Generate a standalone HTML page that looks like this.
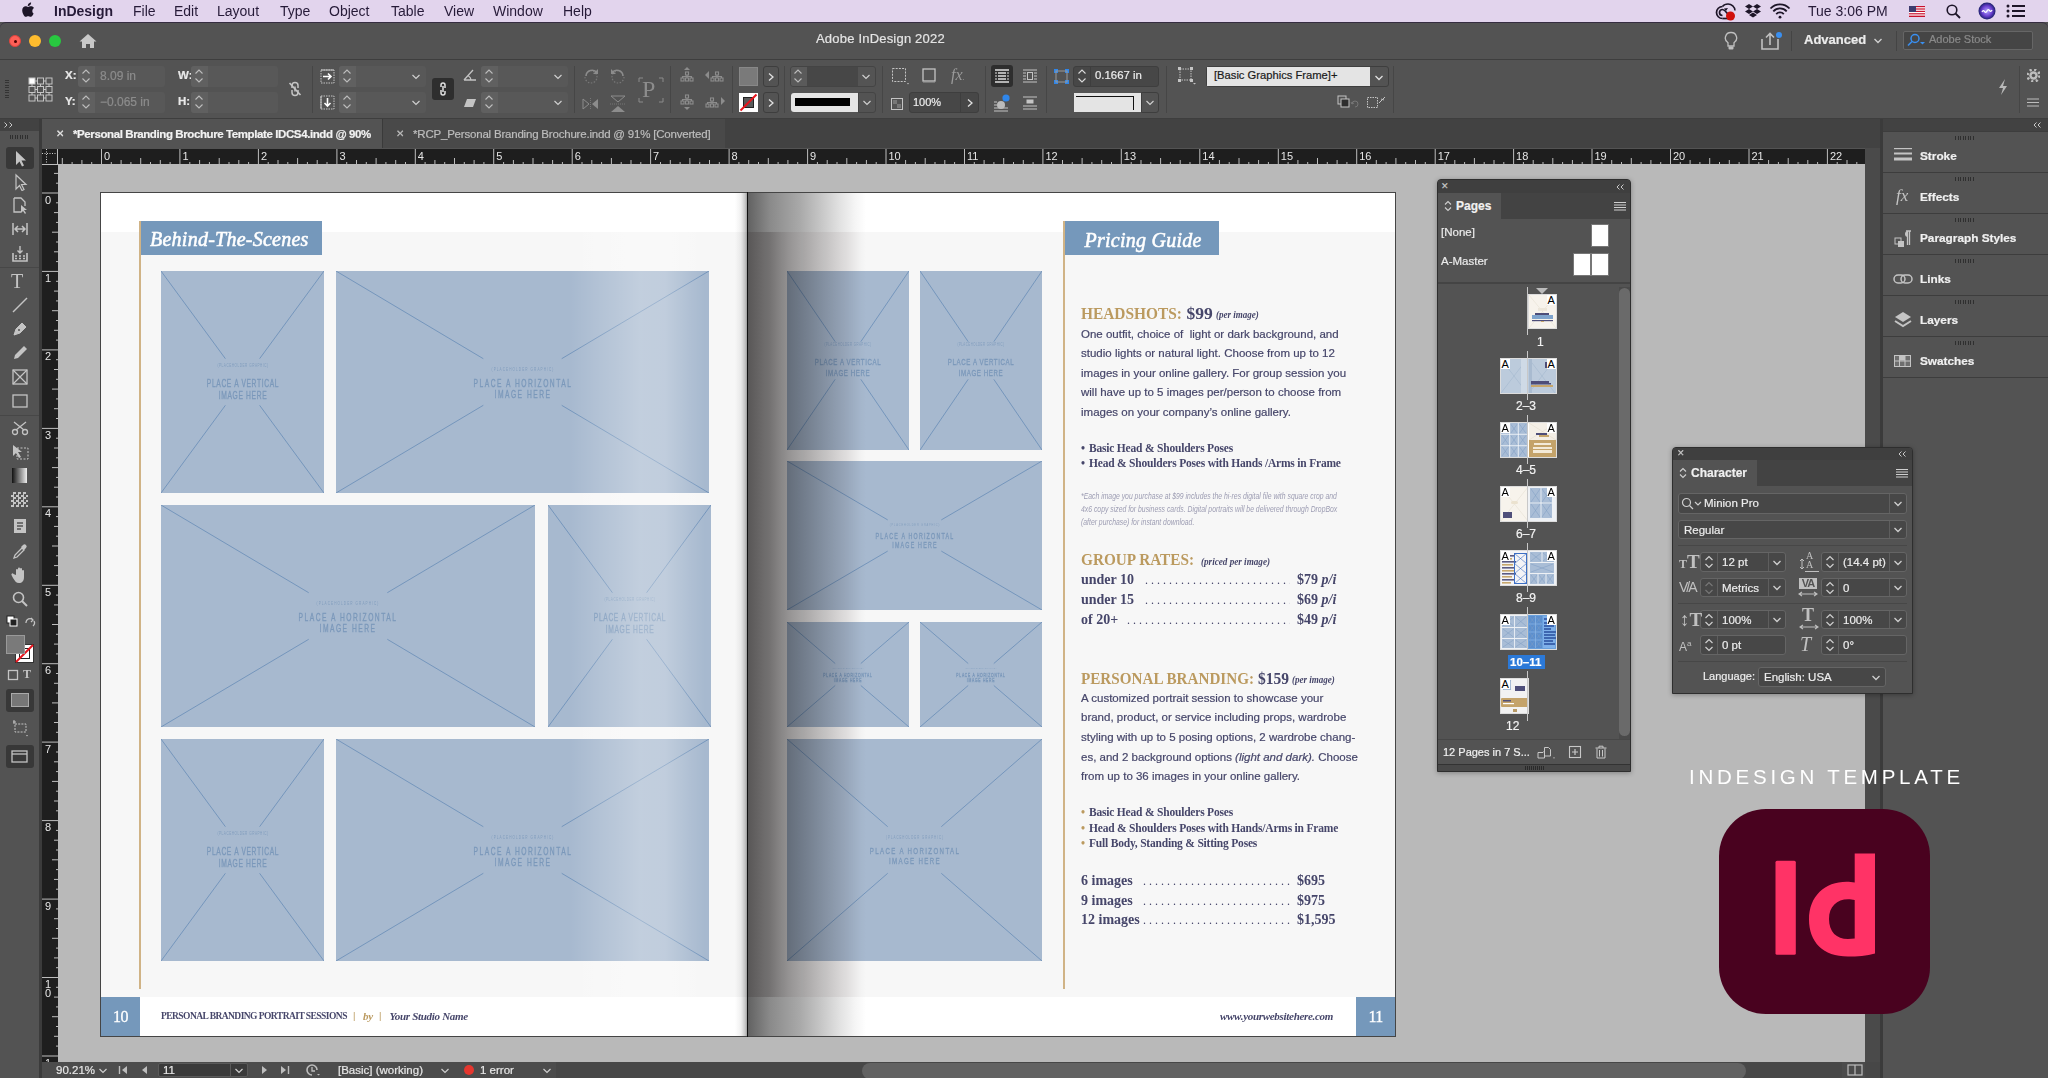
<!DOCTYPE html>
<html><head><meta charset="utf-8">
<style>
*{margin:0;padding:0;box-sizing:border-box}
html,body{width:2048px;height:1078px;overflow:hidden;background:#535353;font-family:"Liberation Sans",sans-serif;position:relative}
.a{position:absolute}

#menubar{left:0;top:0;width:2048px;height:22px;background:#e2d4ed}
.mi{position:absolute;top:3px;font-size:14px;color:#261a38;line-height:16px;white-space:nowrap}
.tb{background:#535353}
.ui{font-size:12px;color:#e8e8e8;white-space:nowrap;position:absolute;-webkit-text-stroke-width:.2px}


.ph{background:#a7b9cf;overflow:hidden}
.pht{position:absolute;left:-50%;width:200%;text-align:center;color:#7b98ba;font-family:"Liberation Sans",sans-serif;font-weight:normal;-webkit-text-stroke:.35px #7b98ba;transform:scaleX(.62);white-space:nowrap}
.hdr span{position:absolute;font-family:"Liberation Serif",serif;font-style:italic;font-weight:normal;-webkit-text-stroke:.55px #fff;color:#fff;font-size:20px;white-space:nowrap;letter-spacing:.25px}
.pn{color:#fff;font-family:"Liberation Serif",serif;font-size:16px;text-align:center;line-height:39px;letter-spacing:-.6px;-webkit-text-stroke:.3px #fff}
.ft{font-family:"Liberation Serif",serif;font-weight:bold;font-size:9.5px;color:#46466a;white-space:nowrap;line-height:14px;letter-spacing:-.3px}
.ft i{font-size:11px}
.g{color:#bb9a5f}
.gh3{font-family:"Liberation Serif",serif;font-weight:bold;font-size:17.5px;line-height:20px;color:#bb9a5f;white-space:nowrap}
.pr3{font-family:"Liberation Serif",serif;font-weight:bold;font-size:17.5px;line-height:20px;color:#46466a;white-space:nowrap}
.pi2{font-family:"Liberation Serif",serif;font-weight:bold;font-style:italic;font-size:10.5px;line-height:12px;color:#46466a;white-space:nowrap}
.hl{font-family:"Liberation Serif",serif;white-space:nowrap;line-height:22px;color:#46466a}
.gh{color:#bb9a5f;font-size:17px;font-weight:bold;letter-spacing:-.6px}
.gh2{color:#bb9a5f;font-size:17px;font-weight:bold;letter-spacing:-.6px}
.pr{font-size:17px;letter-spacing:-.4px}
.pi{font-size:10px;font-weight:bold;letter-spacing:-.5px}
.bd{font-family:"Liberation Sans",sans-serif;font-size:11.5px;color:#46466a;white-space:nowrap;line-height:16px;-webkit-text-stroke:.2px #46466a}
.bl{font-family:"Liberation Serif",serif;font-weight:bold;font-size:11.5px;color:#46466a;white-space:nowrap;line-height:14px;letter-spacing:-.2px}
.bu{display:inline-block;width:8px}
.nt{font-family:"Liberation Sans",sans-serif;font-style:italic;font-size:9.5px;color:#9d9db3;white-space:nowrap;line-height:12px;transform:scaleX(.72);transform-origin:0 0}
.rt{font-family:"Liberation Serif",serif;font-weight:bold;font-size:14px;color:#46466a;white-space:nowrap;line-height:18px}
.dt{font-family:"Liberation Serif",serif;font-size:12px;color:#46466a;white-space:nowrap;line-height:18px}

</style></head><body>
<div id="menubar" class="a">
<span class="mi" style="left:54px;font-weight:bold">InDesign</span>
<span class="mi" style="left:133px;">File</span>
<span class="mi" style="left:174px;">Edit</span>
<span class="mi" style="left:217px;">Layout</span>
<span class="mi" style="left:280px;">Type</span>
<span class="mi" style="left:329px;">Object</span>
<span class="mi" style="left:391px;">Table</span>
<span class="mi" style="left:444px;">View</span>
<span class="mi" style="left:493px;">Window</span>
<span class="mi" style="left:563px;">Help</span>
</div>
<div class="a" style="left:0;top:22px;width:2048px;height:38px;background:#535353;border-top:1px solid #352c40;border-radius:6px 6px 0 0"></div>
<div class="a" style="left:0;top:59px;width:2048px;height:1px;background:#3e3e3e"></div>
<div class="a" style="left:0;top:60px;width:2048px;height:59px;background:#535353"></div>
<div class="a" style="left:0;top:118px;width:2048px;height:1px;background:#3e3e3e"></div>
<div class="a" style="left:0;top:119px;width:39px;height:959px;background:#535353"></div>
<div class="a" style="left:39px;top:119px;width:3px;height:959px;background:#3b3b3b"></div>
<div class="a" style="left:42px;top:119px;width:1838px;height:29px;background:#424242"></div>
<div class="a" style="left:42px;top:119px;width:340px;height:29px;background:#535353"></div>
<div class="a" style="left:382px;top:119px;width:343px;height:29px;background:#494949;border-left:1px solid #3a3a3a"></div>
<div class="a" style="left:42px;top:149px;width:1823px;height:15px;background:#1e1e1e"></div>
<div class="a" style="left:42px;top:164px;width:16px;height:898px;background:#1e1e1e"></div>
<div class="a" style="left:58px;top:164px;width:1807px;height:898px;background:#b9b9b9"></div>
<div class="a" style="left:1865px;top:148px;width:15px;height:914px;background:#4a4a4a"></div>
<div class="a" style="left:42px;top:1062px;width:1838px;height:16px;background:#474747"></div>
<div class="a" style="left:1880px;top:119px;width:3px;height:959px;background:#3b3b3b"></div>
<div class="a" style="left:1883px;top:119px;width:165px;height:959px;background:#535353"></div>
<div class="a" style="left:100px;top:192px;width:1296px;height:845px;background:#454545"></div>
<div class="a" style="left:101px;top:193px;width:1294px;height:843px;background:#fff"></div>
<div class="a" style="left:101px;top:232px;width:1294px;height:765px;background:#f7f7f7"></div>
<div class="a hdr" style="left:139px;top:221px;width:183px;height:34px;background:#7598bb"><span style="left:11px;top:7px">Behind-The-Scenes</span></div>
<div class="a hdr" style="left:1064px;top:221px;width:155px;height:34px;background:#7598bb"><span style="left:20.5px;top:8px">Pricing Guide</span></div>
<div class="a" style="left:139px;top:221px;width:1.5px;height:768px;background:#d0b386"></div>
<div class="a" style="left:1063px;top:221px;width:1.5px;height:768px;background:#d0b386"></div>
<div class="a ph" style="left:161px;top:271px;width:163px;height:222px"><svg class="a" style="left:0;top:0" width="163" height="222"><g stroke="#7294bb" stroke-width="0.95"><line x1="0" y1="0" x2="64.4" y2="87.7"/><line x1="163" y1="0" x2="98.6" y2="87.7"/><line x1="0" y1="222" x2="64.4" y2="134.3"/><line x1="163" y1="222" x2="98.6" y2="134.3"/></g></svg><div class="pht" style="top:91.0px;font-size:5.0px;line-height:6.0px;-webkit-text-stroke-width:0;letter-spacing:0.85px;opacity:.85">(PLACEHOLDER GRAPHIC)</div><div class="pht" style="top:106.2px;font-size:10.8px;line-height:12.0px;letter-spacing:1.05px">PLACE A VERTICAL<br>IMAGE HERE</div></div>
<div class="a ph" style="left:336px;top:271px;width:373px;height:222px"><svg class="a" style="left:0;top:0" width="373" height="222"><g stroke="#7294bb" stroke-width="0.95"><line x1="0" y1="0" x2="147.3" y2="87.7"/><line x1="373" y1="0" x2="225.7" y2="87.7"/><line x1="0" y1="222" x2="147.3" y2="134.3"/><line x1="373" y1="222" x2="225.7" y2="134.3"/></g></svg><div class="pht" style="top:95.0px;font-size:5.0px;line-height:6.0px;-webkit-text-stroke-width:0;letter-spacing:1.75px;opacity:.85">(PLACEHOLDER GRAPHIC)</div><div class="pht" style="top:107.0px;font-size:10.8px;line-height:10.5px;letter-spacing:2.40px">PLACE A HORIZONTAL<br>IMAGE HERE</div></div>
<div class="a ph" style="left:161px;top:505px;width:374px;height:222px"><svg class="a" style="left:0;top:0" width="374" height="222"><g stroke="#7294bb" stroke-width="0.95"><line x1="0" y1="0" x2="147.7" y2="87.7"/><line x1="374" y1="0" x2="226.3" y2="87.7"/><line x1="0" y1="222" x2="147.7" y2="134.3"/><line x1="374" y1="222" x2="226.3" y2="134.3"/></g></svg><div class="pht" style="top:95.0px;font-size:5.0px;line-height:6.0px;-webkit-text-stroke-width:0;letter-spacing:1.75px;opacity:.85">(PLACEHOLDER GRAPHIC)</div><div class="pht" style="top:107.0px;font-size:10.8px;line-height:10.5px;letter-spacing:2.40px">PLACE A HORIZONTAL<br>IMAGE HERE</div></div>
<div class="a ph" style="left:548px;top:505px;width:163px;height:222px"><svg class="a" style="left:0;top:0" width="163" height="222"><g stroke="#7294bb" stroke-width="0.95"><line x1="0" y1="0" x2="64.4" y2="87.7"/><line x1="163" y1="0" x2="98.6" y2="87.7"/><line x1="0" y1="222" x2="64.4" y2="134.3"/><line x1="163" y1="222" x2="98.6" y2="134.3"/></g></svg><div class="pht" style="top:91.0px;font-size:5.0px;line-height:6.0px;-webkit-text-stroke-width:0;letter-spacing:0.85px;opacity:.85">(PLACEHOLDER GRAPHIC)</div><div class="pht" style="top:106.2px;font-size:10.8px;line-height:12.0px;letter-spacing:1.05px">PLACE A VERTICAL<br>IMAGE HERE</div></div>
<div class="a ph" style="left:161px;top:739px;width:163px;height:222px"><svg class="a" style="left:0;top:0" width="163" height="222"><g stroke="#7294bb" stroke-width="0.95"><line x1="0" y1="0" x2="64.4" y2="87.7"/><line x1="163" y1="0" x2="98.6" y2="87.7"/><line x1="0" y1="222" x2="64.4" y2="134.3"/><line x1="163" y1="222" x2="98.6" y2="134.3"/></g></svg><div class="pht" style="top:91.0px;font-size:5.0px;line-height:6.0px;-webkit-text-stroke-width:0;letter-spacing:0.85px;opacity:.85">(PLACEHOLDER GRAPHIC)</div><div class="pht" style="top:106.2px;font-size:10.8px;line-height:12.0px;letter-spacing:1.05px">PLACE A VERTICAL<br>IMAGE HERE</div></div>
<div class="a ph" style="left:336px;top:739px;width:373px;height:222px"><svg class="a" style="left:0;top:0" width="373" height="222"><g stroke="#7294bb" stroke-width="0.95"><line x1="0" y1="0" x2="147.3" y2="87.7"/><line x1="373" y1="0" x2="225.7" y2="87.7"/><line x1="0" y1="222" x2="147.3" y2="134.3"/><line x1="373" y1="222" x2="225.7" y2="134.3"/></g></svg><div class="pht" style="top:95.0px;font-size:5.0px;line-height:6.0px;-webkit-text-stroke-width:0;letter-spacing:1.75px;opacity:.85">(PLACEHOLDER GRAPHIC)</div><div class="pht" style="top:107.0px;font-size:10.8px;line-height:10.5px;letter-spacing:2.40px">PLACE A HORIZONTAL<br>IMAGE HERE</div></div>
<div class="a ph" style="left:787px;top:271px;width:122px;height:179px"><svg class="a" style="left:0;top:0" width="122" height="179"><g stroke="#7294bb" stroke-width="0.95"><line x1="0" y1="0" x2="48.2" y2="70.7"/><line x1="122" y1="0" x2="73.8" y2="70.7"/><line x1="0" y1="179" x2="48.2" y2="108.3"/><line x1="122" y1="179" x2="73.8" y2="108.3"/></g></svg><div class="pht" style="top:71.1px;font-size:4.6px;line-height:5.5px;-webkit-text-stroke-width:0;letter-spacing:0.78px;opacity:.85">(PLACEHOLDER GRAPHIC)</div><div class="pht" style="top:85.1px;font-size:9.9px;line-height:11.0px;letter-spacing:0.97px">PLACE A VERTICAL<br>IMAGE HERE</div></div>
<div class="a ph" style="left:920px;top:271px;width:122px;height:179px"><svg class="a" style="left:0;top:0" width="122" height="179"><g stroke="#7294bb" stroke-width="0.95"><line x1="0" y1="0" x2="48.2" y2="70.7"/><line x1="122" y1="0" x2="73.8" y2="70.7"/><line x1="0" y1="179" x2="48.2" y2="108.3"/><line x1="122" y1="179" x2="73.8" y2="108.3"/></g></svg><div class="pht" style="top:71.1px;font-size:4.6px;line-height:5.5px;-webkit-text-stroke-width:0;letter-spacing:0.78px;opacity:.85">(PLACEHOLDER GRAPHIC)</div><div class="pht" style="top:85.1px;font-size:9.9px;line-height:11.0px;letter-spacing:0.97px">PLACE A VERTICAL<br>IMAGE HERE</div></div>
<div class="a ph" style="left:787px;top:461px;width:255px;height:149px"><svg class="a" style="left:0;top:0" width="255" height="149"><g stroke="#7294bb" stroke-width="0.95"><line x1="0" y1="0" x2="100.7" y2="58.9"/><line x1="255" y1="0" x2="154.3" y2="58.9"/><line x1="0" y1="149" x2="100.7" y2="90.1"/><line x1="255" y1="149" x2="154.3" y2="90.1"/></g></svg><div class="pht" style="top:61.7px;font-size:4.0px;line-height:4.8px;-webkit-text-stroke-width:0;letter-spacing:1.40px;opacity:.85">(PLACEHOLDER GRAPHIC)</div><div class="pht" style="top:71.3px;font-size:8.6px;line-height:8.4px;letter-spacing:1.92px">PLACE A HORIZONTAL<br>IMAGE HERE</div></div>
<div class="a ph" style="left:787px;top:622px;width:122px;height:105px"><svg class="a" style="left:0;top:0" width="122" height="105"><g stroke="#7294bb" stroke-width="0.95"><line x1="0" y1="0" x2="48.2" y2="41.5"/><line x1="122" y1="0" x2="73.8" y2="41.5"/><line x1="0" y1="105" x2="48.2" y2="63.5"/><line x1="122" y1="105" x2="73.8" y2="63.5"/></g></svg><div class="pht" style="top:44.5px;font-size:2.5px;line-height:3.0px;-webkit-text-stroke-width:0;letter-spacing:0.88px;opacity:.85">(PLACEHOLDER GRAPHIC)</div><div class="pht" style="top:50.5px;font-size:5.4px;line-height:5.2px;letter-spacing:1.20px">PLACE A HORIZONTAL<br>IMAGE HERE</div></div>
<div class="a ph" style="left:920px;top:622px;width:122px;height:105px"><svg class="a" style="left:0;top:0" width="122" height="105"><g stroke="#7294bb" stroke-width="0.95"><line x1="0" y1="0" x2="48.2" y2="41.5"/><line x1="122" y1="0" x2="73.8" y2="41.5"/><line x1="0" y1="105" x2="48.2" y2="63.5"/><line x1="122" y1="105" x2="73.8" y2="63.5"/></g></svg><div class="pht" style="top:44.5px;font-size:2.5px;line-height:3.0px;-webkit-text-stroke-width:0;letter-spacing:0.88px;opacity:.85">(PLACEHOLDER GRAPHIC)</div><div class="pht" style="top:50.5px;font-size:5.4px;line-height:5.2px;letter-spacing:1.20px">PLACE A HORIZONTAL<br>IMAGE HERE</div></div>
<div class="a ph" style="left:787px;top:739px;width:255px;height:222px"><svg class="a" style="left:0;top:0" width="255" height="222"><g stroke="#7294bb" stroke-width="0.95"><line x1="0" y1="0" x2="100.7" y2="87.7"/><line x1="255" y1="0" x2="154.3" y2="87.7"/><line x1="0" y1="222" x2="100.7" y2="134.3"/><line x1="255" y1="222" x2="154.3" y2="134.3"/></g></svg><div class="pht" style="top:96.3px;font-size:4.6px;line-height:5.5px;-webkit-text-stroke-width:0;letter-spacing:1.61px;opacity:.85">(PLACEHOLDER GRAPHIC)</div><div class="pht" style="top:107.3px;font-size:9.9px;line-height:9.7px;letter-spacing:2.21px">PLACE A HORIZONTAL<br>IMAGE HERE</div></div>
<div class="a pn" style="left:101px;top:997px;width:39px;height:39px;background:#7598bb">10</div>
<div class="a pn" style="left:1356px;top:997px;width:39px;height:39px;background:#7598bb">11</div>
<div class="a ft" style="left:161px;top:1009px;letter-spacing:-.55px">PERSONAL BRANDING PORTRAIT SESSIONS</div>
<div class="a ft g" style="left:353px;top:1008px;font-size:11px">|</div>
<div class="a ft g" style="left:363px;top:1009px"><i>by</i></div>
<div class="a ft g" style="left:379px;top:1008px;font-size:11px">|</div>
<div class="a ft" style="left:389.5px;top:1009px"><i>Your Studio Name</i></div>
<div class="a ft" style="left:1220px;top:1009px"><i>www.yourwebsitehere.com</i></div>
<div class="a gh3" style="left:1081px;top:303.1px;transform:scaleX(0.88);transform-origin:0 0">HEADSHOTS:</div>
<div class="a pr3" style="left:1186.5px;top:303.1px;transform:scaleX(1.0);transform-origin:0 0">$99</div>
<div class="a pi2" style="left:1216px;top:309.3px;transform:scaleX(0.86);transform-origin:0 0">(per image)</div>
<div class="a bd" style="left:1081px;top:326px;">One outfit, choice of&nbsp; light or dark background, and</div>
<div class="a bd" style="left:1081px;top:345px;">studio lights or natural light. Choose from up to 12</div>
<div class="a bd" style="left:1081px;top:365px;">images in your online gallery. For group session you</div>
<div class="a bd" style="left:1081px;top:384px;">will have up to 5 images per/person to choose from</div>
<div class="a bd" style="left:1081px;top:404px;">images on your company’s online gallery.</div>
<div class="a bl" style="left:1081px;top:441.2px;"><span class="bu">&bull;</span>Basic Head &amp; Shoulders Poses</div>
<div class="a bl" style="left:1081px;top:456.2px;"><span class="bu">&bull;</span>Head &amp; Shoulders Poses with Hands /Arms in Frame</div>
<div class="a nt" style="left:1081px;top:490px;">*Each image you purchase at $99 includes the hi-res digital file with square crop and</div>
<div class="a nt" style="left:1081px;top:503px;">4x6 copy sized for business cards. Digital portraits will be delivered through DropBox</div>
<div class="a nt" style="left:1081px;top:516px;">(after purchase) for instant download.</div>
<div class="a gh3" style="left:1081px;top:548.9px;transform:scaleX(0.873);transform-origin:0 0">GROUP RATES:</div>
<div class="a pi2" style="left:1201px;top:555.7px;transform:scaleX(0.87);transform-origin:0 0">(priced per image)</div>
<div class="a rt" style="left:1081px;top:571px;">under 10</div>
<div class="a dt" style="left:1145px;top:571px;"><span style="display:inline-block;width:145px;overflow:hidden;white-space:nowrap"> . . . . . . . . . . . . . . . . . . . . . . . . .</span></div>
<div class="a rt" style="left:1297px;top:571px;">$79 <i>p/i</i></div>
<div class="a rt" style="left:1081px;top:591px;">under 15</div>
<div class="a dt" style="left:1145px;top:591px;"><span style="display:inline-block;width:145px;overflow:hidden;white-space:nowrap"> . . . . . . . . . . . . . . . . . . . . . . . . .</span></div>
<div class="a rt" style="left:1297px;top:591px;">$69 <i>p/i</i></div>
<div class="a rt" style="left:1081px;top:611px;">of 20+</div>
<div class="a dt" style="left:1127px;top:611px;"><span style="display:inline-block;width:163px;overflow:hidden;white-space:nowrap"> . . . . . . . . . . . . . . . . . . . . . . . . . . . .</span></div>
<div class="a rt" style="left:1297px;top:611px;">$49 <i>p/i</i></div>
<div class="a gh3" style="left:1080.6px;top:667.9px;transform:scaleX(0.866);transform-origin:0 0">PERSONAL BRANDING:</div>
<div class="a pr3" style="left:1258px;top:667.9px;transform:scaleX(0.886);transform-origin:0 0">$159</div>
<div class="a pi2" style="left:1292px;top:674.3px;transform:scaleX(0.86);transform-origin:0 0">(per image)</div>
<div class="a bd" style="left:1081px;top:690px;">A customized portrait session to showcase your</div>
<div class="a bd" style="left:1081px;top:709px;">brand, product, or service including props, wardrobe</div>
<div class="a bd" style="left:1081px;top:729px;">styling with up to 5 posing options, 2 wardrobe chang-</div>
<div class="a bd" style="left:1081px;top:749px;">es, and 2 background options <i>(light and dark).</i> Choose</div>
<div class="a bd" style="left:1081px;top:768px;">from up to 36 images in your online gallery.</div>
<div class="a bl" style="left:1081px;top:805.0px;"><span class="bu g">&bull;</span>Basic Head &amp; Shoulders Poses</div>
<div class="a bl" style="left:1081px;top:820.5px;"><span class="bu g">&bull;</span>Head &amp; Shoulders Poses with Hands/Arms in Frame</div>
<div class="a bl" style="left:1081px;top:836.0px;"><span class="bu g">&bull;</span>Full Body, Standing &amp; Sitting Poses</div>
<div class="a rt" style="left:1081px;top:872.0px;">6 images</div>
<div class="a dt" style="left:1143px;top:872.0px;"><span style="display:inline-block;width:147px;overflow:hidden;white-space:nowrap"> . . . . . . . . . . . . . . . . . . . . . . . . .</span></div>
<div class="a rt" style="left:1297px;top:872.0px;">$695</div>
<div class="a rt" style="left:1081px;top:891.5px;">9 images</div>
<div class="a dt" style="left:1143px;top:891.5px;"><span style="display:inline-block;width:147px;overflow:hidden;white-space:nowrap"> . . . . . . . . . . . . . . . . . . . . . . . . .</span></div>
<div class="a rt" style="left:1297px;top:891.5px;">$975</div>
<div class="a rt" style="left:1081px;top:911.0px;">12 images</div>
<div class="a dt" style="left:1143px;top:911.0px;"><span style="display:inline-block;width:147px;overflow:hidden;white-space:nowrap"> . . . . . . . . . . . . . . . . . . . . . . . . .</span></div>
<div class="a rt" style="left:1297px;top:911.0px;">$1,595</div>
<div class="a" style="left:570px;top:193px;width:140px;height:843px;background:linear-gradient(90deg,rgba(255,255,255,0) 0px,rgba(255,255,255,.14) 30px,rgba(255,255,255,.31) 70px,rgba(255,255,255,.29) 95px,rgba(255,255,255,.1) 120px,rgba(255,255,255,0) 135px)"></div>
<div class="a" style="left:735px;top:193px;width:12px;height:843px;mix-blend-mode:multiply;background:linear-gradient(90deg,#fff 0%,#f0f0f0 50%,#c8c8c8 85%,#a0a0a0 100%)"></div>
<div class="a" style="left:746.5px;top:192px;width:1.6px;height:845px;background:#111"></div>
<div class="a" style="left:748px;top:193px;width:140px;height:39px;mix-blend-mode:multiply;background:linear-gradient(90deg,#626262 0px,#8a8a8a 22px,#a9a9a9 52px,#c5c5c5 72px,#e2e2e2 92px,#f5f5f5 107px,#fff 118px)"></div>
<div class="a" style="left:748px;top:232px;width:140px;height:765px;mix-blend-mode:multiply;background:linear-gradient(90deg,#5c5a5a 0px,#787676 22px,#999797 40px,#bab8b8 65px,#e5e3e3 97px,#fbfbfb 113px,#fff 118px)"></div>
<div class="a" style="left:748px;top:997px;width:140px;height:39px;mix-blend-mode:multiply;background:linear-gradient(90deg,#626262 0px,#8a8a8a 22px,#a9a9a9 52px,#c5c5c5 72px,#e2e2e2 92px,#f5f5f5 107px,#fff 118px)"></div>
<svg class="a" style="left:1714px;top:1px;" width="24" height="20" viewBox="0 0 24 20"><path d="M8.5 17.5A6 6 0 0 1 8.5 5.5" stroke="#1d1528" stroke-width="1.7" fill="none"/><path d="M8.5 14.5A3 3 0 0 1 8.5 8.5C10.5 8.5 11.5 10 13 12L15.5 15.5" stroke="#1d1528" stroke-width="1.7" fill="none"/><path d="M8.5 17.5H15" stroke="#1d1528" stroke-width="1.7"/><path d="M8.5 5.5C10 3.5 12 3 14 3A7 7 0 0 1 21 9.5" stroke="#1d1528" stroke-width="1.5" fill="none"/><path d="M10 7.5L14 7L12 10Z" fill="#1d1528"/><circle cx="16.5" cy="15" r="4.5" fill="#d0100c"/></svg>
<svg class="a" style="left:1744px;top:3px;" width="18" height="16" viewBox="0 0 18 16"><path d="M5 1L1 3.5L5 6L9 3.5Z M13 1L9 3.5L13 6L17 3.5Z M5 6L1 8.5L5 11L9 8.5Z M13 6L9 8.5L13 11L17 8.5Z M5 12L9 14.5L13 12L9 9.5Z" fill="#1d1528"/></svg>
<svg class="a" style="left:1769px;top:2px;" width="22" height="18" viewBox="0 0 22 18"><path d="M1.5 6.5a13 13 0 0 1 19 0" stroke="#1d1528" stroke-width="1.8" fill="none"/><path d="M4.3 9.3a9 9 0 0 1 13.4 0" stroke="#1d1528" stroke-width="1.8" fill="none"/><path d="M7.2 12.2a5 5 0 0 1 7.6 0" stroke="#1d1528" stroke-width="1.8" fill="none"/><circle cx="11" cy="15.2" r="1.4" fill="#1d1528"/></svg>
<div class="mi" style="left:1808px">Tue 3:06 PM</div>
<svg class="a" style="left:1909px;top:6px;" width="16" height="11" viewBox="0 0 16 11"><rect width="16" height="11" fill="#fff"/><g fill="#c8102e"><rect y="0" width="16" height="1.2"/><rect y="2.4" width="16" height="1.2"/><rect y="4.8" width="16" height="1.2"/><rect y="7.2" width="16" height="1.2"/><rect y="9.6" width="16" height="1.4"/></g><rect width="7" height="6" fill="#3c3b6e"/></svg>
<svg class="a" style="left:1946px;top:4px;" width="15" height="15" viewBox="0 0 15 15"><circle cx="6" cy="6" r="4.8" stroke="#1d1528" stroke-width="1.6" fill="none"/><path d="M9.5 9.5L14 14" stroke="#1d1528" stroke-width="1.8"/></svg>
<svg class="a" style="left:1978px;top:2px;" width="18" height="18" viewBox="0 0 18 18"><defs><radialGradient id="sg" cx="50%" cy="50%" r="50%"><stop offset="0" stop-color="#b6a7ff"/><stop offset=".6" stop-color="#6a3fd0"/><stop offset="1" stop-color="#1b1f6b"/></radialGradient></defs><circle cx="9" cy="9" r="8.5" fill="url(#sg)"/><path d="M4 10c2-4 3 3 5-1s3 3 5-1" stroke="#fff" stroke-width="1.3" fill="none"/></svg>
<svg class="a" style="left:2006px;top:4px;" width="20" height="14" viewBox="0 0 20 14"><g fill="#1d1528"><circle cx="2" cy="2" r="1.5"/><circle cx="2" cy="7" r="1.5"/><circle cx="2" cy="12" r="1.5"/><rect x="6" y="1" width="13" height="2"/><rect x="6" y="6" width="13" height="2"/><rect x="6" y="11" width="13" height="2"/></g></svg>
<svg class="a" style="left:21px;top:2px;" width="14" height="17" viewBox="0 0 14 17"><path d="M11.3 9c0-2 1.6-3 1.7-3.1c-1-1.4-2.4-1.6-2.9-1.6c-1.2-.1-2.4.7-3 .7s-1.6-.7-2.6-.7C3.1 4.3 1.2 5.5 1.2 8.2c0 2.7 2 6.6 3.6 6.6c.9 0 1.3-.6 2.4-.6s1.4.6 2.4.6c1.7 0 3-3.2 3.1-3.3c-.1 0-1.4-.6-1.4-2.5zM9.2 2.9c.6-.7 1-1.6.9-2.5c-.8 0-1.8.5-2.4 1.2c-.5.6-1 1.5-.9 2.4c.9.1 1.8-.4 2.4-1.1z" fill="#1d1528"/></svg>
<div class="a" style="left:9px;top:35px;width:12px;height:12px;border-radius:50%;background:#fe5f57;border:.5px solid #e0443e"></div>
<div class="a" style="left:13.5px;top:39.5px;width:3px;height:3px;border-radius:50%;background:#4d0000"></div>
<div class="a" style="left:29px;top:35px;width:12px;height:12px;border-radius:50%;background:#febc2e"></div>
<div class="a" style="left:49px;top:35px;width:12px;height:12px;border-radius:50%;background:#28c840"></div>
<svg class="a" style="left:79px;top:33px;" width="18" height="16" viewBox="0 0 18 16"><path d="M9 1L0.5 8.5H3V15H7V11H11V15H15V8.5H17.5Z" fill="#c8c8c8"/></svg>
<div class="ui" style="left:816px;top:31px;font-size:13px;color:#e4e4e4;letter-spacing:.2px">Adobe InDesign 2022</div>
<svg class="a" style="left:1724px;top:31px;" width="14" height="20" viewBox="0 0 14 20"><path d="M7 1.5a5.5 5.5 0 0 0-3 10.2V15h6v-3.3A5.5 5.5 0 0 0 7 1.5z" stroke="#c0c0c0" stroke-width="1.3" fill="none"/><rect x="4.5" y="15.5" width="5" height="3" rx="1" fill="#c0c0c0"/></svg>
<svg class="a" style="left:1759px;top:31px;" width="24" height="20" viewBox="0 0 24 20"><path d="M3 8v10h16V8" stroke="#c0c0c0" stroke-width="1.6" fill="none"/><path d="M11 14V3M7 6.5L11 2.5L15 6.5" stroke="#c0c0c0" stroke-width="1.6" fill="none"/><circle cx="20" cy="4" r="3" fill="#3a8ff0"/></svg>
<div class="a" style="left:1791px;top:31px;width:1px;height:20px;background:#444"></div>
<div class="ui" style="left:1804px;top:32px;font-size:13px;font-weight:bold;color:#ececec">Advanced</div>
<svg class="a" style="left:1873px;top:37px;" width="10" height="8" viewBox="0 0 10 8"><path d="M1.5 2L5 5.5L8.5 2" stroke="#cfcfcf" fill="none" stroke-width="1.4"/></svg>
<div class="a" style="left:1896px;top:31px;width:1px;height:20px;background:#444"></div>
<div class="a" style="left:1903px;top:31px;width:130px;height:19px;background:#454545;border:1px solid #666;border-radius:2px"></div>
<svg class="a" style="left:1907px;top:33px;" width="20" height="14" viewBox="0 0 20 14"><circle cx="8" cy="5.5" r="4" stroke="#3a8ff0" stroke-width="1.5" fill="none"/><path d="M5 8.5L1 12.5" stroke="#3a8ff0" stroke-width="1.6"/><path d="M13 9l2.5 2.5L18 9" fill="#3a8ff0"/></svg>
<div class="ui" style="left:1929px;top:33px;font-size:11px;color:#8a8a8a">Adobe Stock</div>
<div class="a" style="left:5px;top:80px;width:4px;height:19px;background:repeating-linear-gradient(180deg,#333 0 1px,transparent 1px 2.5px)"></div>
<svg class="a" style="left:28px;top:77px;" width="26" height="26" viewBox="0 0 26 26"><rect x="1.0" y="1.0" width="6" height="6" stroke="#c4c4c4" fill="#fff" stroke-width="1"/><rect x="9.5" y="1.0" width="6" height="6" stroke="#c4c4c4" fill="none" stroke-width="1"/><rect x="18.0" y="1.0" width="6" height="6" stroke="#c4c4c4" fill="none" stroke-width="1"/><rect x="1.0" y="9.5" width="6" height="6" stroke="#c4c4c4" fill="none" stroke-width="1"/><rect x="9.5" y="9.5" width="6" height="6" stroke="#c4c4c4" fill="none" stroke-width="1"/><rect x="18.0" y="9.5" width="6" height="6" stroke="#c4c4c4" fill="none" stroke-width="1"/><rect x="1.0" y="18.0" width="6" height="6" stroke="#c4c4c4" fill="none" stroke-width="1"/><rect x="9.5" y="18.0" width="6" height="6" stroke="#c4c4c4" fill="none" stroke-width="1"/><rect x="18.0" y="18.0" width="6" height="6" stroke="#c4c4c4" fill="none" stroke-width="1"/><path d="M7 4h2.5M15.5 4h2.5M7 12.5h2.5M15.5 12.5h2.5M7 21h2.5M15.5 21h2.5M4 7v2.5M12.5 7v2.5M21 7v2.5M4 15.5v2.5M12.5 15.5v2.5M21 15.5v2.5" stroke="#c4c4c4"/></svg>
<div class="ui" style="left:65px;top:69px;font-size:11.5px;font-weight:bold;color:#e8e8e8">X:</div>
<div class="ui" style="left:65px;top:95px;font-size:11.5px;font-weight:bold;color:#e8e8e8">Y:</div>
<div class="a" style="left:78px;top:66px;width:87px;height:21px;background:#585858;border-radius:3px"></div><div class="a" style="left:78px;top:66px;width:17px;height:21px;background:#606060;border-radius:3px 0 0 3px"></div><svg class="a" style="left:81px;top:67px;" width="10" height="18" viewBox="0 0 10 18"><path d="M1.5 6.5L5 3L8.5 6.5M1.5 11.5L5 15L8.5 11.5" stroke="#bdbdbd" fill="none" stroke-width="1.1"/></svg><div class="ui" style="left:100px;top:68px;font-size:12px;color:#8c8c8c;line-height:16px">8.09 in</div>
<div class="a" style="left:78px;top:92px;width:87px;height:21px;background:#585858;border-radius:3px"></div><div class="a" style="left:78px;top:92px;width:17px;height:21px;background:#606060;border-radius:3px 0 0 3px"></div><svg class="a" style="left:81px;top:93px;" width="10" height="18" viewBox="0 0 10 18"><path d="M1.5 6.5L5 3L8.5 6.5M1.5 11.5L5 15L8.5 11.5" stroke="#bdbdbd" fill="none" stroke-width="1.1"/></svg><div class="ui" style="left:100px;top:94px;font-size:12px;color:#8c8c8c;line-height:16px">&minus;0.065 in</div>
<div class="ui" style="left:178px;top:69px;font-size:11.5px;font-weight:bold;color:#e8e8e8">W:</div>
<div class="ui" style="left:178px;top:95px;font-size:11.5px;font-weight:bold;color:#e8e8e8">H:</div>
<div class="a" style="left:191px;top:66px;width:87px;height:21px;background:#585858;border-radius:3px"></div><div class="a" style="left:191px;top:66px;width:17px;height:21px;background:#606060;border-radius:3px 0 0 3px"></div><svg class="a" style="left:194px;top:67px;" width="10" height="18" viewBox="0 0 10 18"><path d="M1.5 6.5L5 3L8.5 6.5M1.5 11.5L5 15L8.5 11.5" stroke="#bdbdbd" fill="none" stroke-width="1.1"/></svg>
<div class="a" style="left:191px;top:92px;width:87px;height:21px;background:#585858;border-radius:3px"></div><div class="a" style="left:191px;top:92px;width:17px;height:21px;background:#606060;border-radius:3px 0 0 3px"></div><svg class="a" style="left:194px;top:93px;" width="10" height="18" viewBox="0 0 10 18"><path d="M1.5 6.5L5 3L8.5 6.5M1.5 11.5L5 15L8.5 11.5" stroke="#bdbdbd" fill="none" stroke-width="1.1"/></svg>
<svg class="a" style="left:288px;top:81px;" width="14" height="16" viewBox="0 0 14 16"><path d="M4 7V4.5a3 3 0 0 1 6 0V7M10 9v2.5a3 3 0 0 1-6 0V9M7 5.5v5" stroke="#c4c4c4" stroke-width="1.5" fill="none"/><path d="M1.5 2L12.5 14" stroke="#c4c4c4" stroke-width="1.6"/></svg>
<div class="a" style="left:312px;top:66px;width:1px;height:47px;background:#464646"></div>
<svg class="a" style="left:320px;top:69px;" width="15" height="15" viewBox="0 0 15 15"><rect x="1" y="1" width="13" height="13" stroke="#c4c4c4" fill="none" stroke-dasharray="1.5 1"/><path d="M1 1h13" stroke="#c4c4c4"/><path d="M3 7.5h7M8 4.5l3 3l-3 3" stroke="#fff" stroke-width="1.6" fill="none"/></svg>
<svg class="a" style="left:320px;top:95px;" width="15" height="15" viewBox="0 0 15 15"><rect x="1" y="1" width="13" height="13" stroke="#c4c4c4" fill="none" stroke-dasharray="1.5 1"/><path d="M1 1v13" stroke="#c4c4c4"/><path d="M7.5 3v7M4.5 8l3 3l3-3" stroke="#fff" stroke-width="1.6" fill="none"/></svg>
<div class="a" style="left:339px;top:66px;width:87px;height:21px;background:#585858;border-radius:3px"></div><div class="a" style="left:339px;top:66px;width:17px;height:21px;background:#606060;border-radius:3px 0 0 3px"></div><svg class="a" style="left:342px;top:67px;" width="10" height="18" viewBox="0 0 10 18"><path d="M1.5 6.5L5 3L8.5 6.5M1.5 11.5L5 15L8.5 11.5" stroke="#bdbdbd" fill="none" stroke-width="1.1"/></svg><svg class="a" style="left:411px;top:73px;" width="10" height="8" viewBox="0 0 10 8"><path d="M1.5 2L5 5.5L8.5 2" stroke="#cfcfcf" fill="none" stroke-width="1.2"/></svg>
<div class="a" style="left:339px;top:92px;width:87px;height:21px;background:#585858;border-radius:3px"></div><div class="a" style="left:339px;top:92px;width:17px;height:21px;background:#606060;border-radius:3px 0 0 3px"></div><svg class="a" style="left:342px;top:93px;" width="10" height="18" viewBox="0 0 10 18"><path d="M1.5 6.5L5 3L8.5 6.5M1.5 11.5L5 15L8.5 11.5" stroke="#bdbdbd" fill="none" stroke-width="1.1"/></svg><svg class="a" style="left:411px;top:99px;" width="10" height="8" viewBox="0 0 10 8"><path d="M1.5 2L5 5.5L8.5 2" stroke="#cfcfcf" fill="none" stroke-width="1.2"/></svg>
<div class="a" style="left:432px;top:78px;width:22px;height:22px;background:#2e2e2e;border-radius:3px"></div>
<svg class="a" style="left:438px;top:81px;" width="10" height="16" viewBox="0 0 10 16"><path d="M3 6V4a2 2 0 0 1 4 0v3M7 10v2a2 2 0 0 1-4 0V9M5 5v6" stroke="#e0e0e0" stroke-width="1.5" fill="none"/></svg>
<svg class="a" style="left:463px;top:69px;" width="14" height="12" viewBox="0 0 14 12"><path d="M1 11L10 1M1 11H13M8 11a5 5 0 0 0-2.5-4" stroke="#c4c4c4" stroke-width="1.3" fill="none"/></svg>
<svg class="a" style="left:463px;top:98px;" width="14" height="10" viewBox="0 0 14 10"><path d="M4 1H13L10 9H1Z" fill="#c4c4c4"/></svg>
<div class="a" style="left:481px;top:66px;width:87px;height:21px;background:#585858;border-radius:3px"></div><div class="a" style="left:481px;top:66px;width:17px;height:21px;background:#606060;border-radius:3px 0 0 3px"></div><svg class="a" style="left:484px;top:67px;" width="10" height="18" viewBox="0 0 10 18"><path d="M1.5 6.5L5 3L8.5 6.5M1.5 11.5L5 15L8.5 11.5" stroke="#bdbdbd" fill="none" stroke-width="1.1"/></svg><svg class="a" style="left:553px;top:73px;" width="10" height="8" viewBox="0 0 10 8"><path d="M1.5 2L5 5.5L8.5 2" stroke="#cfcfcf" fill="none" stroke-width="1.2"/></svg>
<div class="a" style="left:481px;top:92px;width:87px;height:21px;background:#585858;border-radius:3px"></div><div class="a" style="left:481px;top:92px;width:17px;height:21px;background:#606060;border-radius:3px 0 0 3px"></div><svg class="a" style="left:484px;top:93px;" width="10" height="18" viewBox="0 0 10 18"><path d="M1.5 6.5L5 3L8.5 6.5M1.5 11.5L5 15L8.5 11.5" stroke="#bdbdbd" fill="none" stroke-width="1.1"/></svg><svg class="a" style="left:553px;top:99px;" width="10" height="8" viewBox="0 0 10 8"><path d="M1.5 2L5 5.5L8.5 2" stroke="#cfcfcf" fill="none" stroke-width="1.2"/></svg>
<div class="a" style="left:574px;top:66px;width:1px;height:47px;background:#464646"></div>
<svg class="a" style="left:582px;top:67px;" width="18" height="18" viewBox="0 0 18 18"><path d="M3 10a6 6 0 1 0 6-6" stroke="#777" stroke-width="1.2" fill="none" stroke-dasharray="1.5 1.5"/><path d="M4 9a6 6 0 0 1 11-3" stroke="#8c8c8c" stroke-width="1.6" fill="none"/><path d="M16 2v5h-5" fill="#8c8c8c"/></svg>
<svg class="a" style="left:609px;top:67px;" width="18" height="18" viewBox="0 0 18 18"><path d="M15 10a6 6 0 1 1-6-6" stroke="#777" stroke-width="1.2" fill="none" stroke-dasharray="1.5 1.5"/><path d="M14 9a6 6 0 0 0-11-3" stroke="#8c8c8c" stroke-width="1.6" fill="none"/><path d="M2 2v5h5" fill="#8c8c8c"/></svg>
<svg class="a" style="left:582px;top:98px;" width="17" height="12" viewBox="0 0 17 12"><path d="M1 1L7 6L1 11Z" stroke="#8c8c8c" fill="none"/><path d="M16 1L10 6L16 11Z" fill="#8c8c8c"/><path d="M8.5 0v12" stroke="#777" stroke-dasharray="1 1"/></svg>
<svg class="a" style="left:610px;top:95px;" width="16" height="18" viewBox="0 0 16 18"><path d="M1 1H15L8 7Z" stroke="#8c8c8c" fill="none"/><path d="M1 17H15L8 11Z" fill="#8c8c8c"/><path d="M0 9H16" stroke="#777" stroke-dasharray="1 1"/></svg>
<svg class="a" style="left:638px;top:77px;" width="26" height="26" viewBox="0 0 26 26"><path d="M1 5V1h4M21 1h4v4M1 21v4h4M25 21v4h-4" stroke="#8c8c8c" fill="none"/></svg>
<div class="a" style="left:642px;top:76px;font-family:Liberation Serif,serif;font-size:24px;color:#8c8c8c;line-height:26px">P</div>
<div class="a" style="left:670px;top:66px;width:1px;height:47px;background:#464646"></div>
<svg class="a" style="left:680px;top:66px;" width="14" height="16" viewBox="0 0 14 16"><g stroke="#8c8c8c" fill="none" stroke-width="1.1"><rect x="5.5" y="6" width="3" height="3"/><rect x="1" y="12" width="3" height="3"/><rect x="5.5" y="12" width="3" height="3"/><rect x="10" y="12" width="3" height="3"/><path d="M7 9v3M2.5 12V10.5h9V12"/></g><path d="M4 4L7 1L10 4Z" fill="#8c8c8c"/></svg>
<svg class="a" style="left:705px;top:69px;" width="20" height="14" viewBox="0 0 20 14"><path d="M4 2L0 6L4 10Z" fill="#8c8c8c"/><g stroke="#8c8c8c" fill="none" stroke-width="1.1"><rect x="10.5" y="3" width="3" height="3"/><rect x="6" y="9" width="3" height="3"/><rect x="10.5" y="9" width="3" height="3"/><rect x="15" y="9" width="3" height="3"/><path d="M12 6v3M7.5 9V7.5h9V9"/></g></svg>
<svg class="a" style="left:680px;top:94px;" width="14" height="18" viewBox="0 0 14 18"><g stroke="#8c8c8c" fill="none" stroke-width="1.1"><rect x="5.5" y="1" width="3" height="3"/><rect x="1" y="7" width="3" height="3"/><rect x="5.5" y="7" width="3" height="3"/><rect x="10" y="7" width="3" height="3"/><path d="M7 4v3M2.5 7V5.5h9V7"/></g><path d="M4 13L7 16L10 13Z" fill="#8c8c8c"/></svg>
<svg class="a" style="left:705px;top:95px;" width="20" height="14" viewBox="0 0 20 14"><path d="M16 2L20 6L16 10Z" fill="#8c8c8c"/><g stroke="#8c8c8c" fill="none" stroke-width="1.1"><rect x="5.5" y="3" width="3" height="3"/><rect x="1" y="9" width="3" height="3"/><rect x="5.5" y="9" width="3" height="3"/><rect x="10" y="9" width="3" height="3"/><path d="M7 6v3M2.5 9V7.5h9V9"/></g></svg>
<div class="a" style="left:732px;top:66px;width:1px;height:47px;background:#464646"></div>
<div class="a" style="left:739px;top:67px;width:19px;height:19px;background:#7a7a7a;border:1px solid #888"></div>
<div class="a" style="left:739px;top:93px;width:19px;height:19px;background:#fff"></div>
<svg class="a" style="left:739px;top:93px;" width="19" height="19" viewBox="0 0 19 19"><rect x="4.5" y="4.5" width="10" height="10" fill="#5a5a5a" stroke="#222"/><path d="M1.5 17.5L17.5 1.5" stroke="#e8141c" stroke-width="2"/></svg>
<div class="a" style="left:763px;top:66px;width:16px;height:21px;border:1px solid #3e3e3e;border-radius:3px"></div>
<svg class="a" style="left:767px;top:72px;" width="8" height="10" viewBox="0 0 8 10"><path d="M2 1.5L6 5L2 8.5" stroke="#e0e0e0" stroke-width="1.3" fill="none"/></svg>
<div class="a" style="left:763px;top:92px;width:16px;height:21px;border:1px solid #3e3e3e;border-radius:3px"></div>
<svg class="a" style="left:767px;top:98px;" width="8" height="10" viewBox="0 0 8 10"><path d="M2 1.5L6 5L2 8.5" stroke="#e0e0e0" stroke-width="1.3" fill="none"/></svg>
<div class="a" style="left:784px;top:66px;width:1px;height:47px;background:#464646"></div>
<div class="a" style="left:790px;top:66px;width:86px;height:21px;background:#545454;border-radius:3px"></div><div class="a" style="left:790px;top:66px;width:17px;height:21px;background:#5a5a5a;border-radius:3px 0 0 3px"></div><svg class="a" style="left:793px;top:67px;" width="10" height="18" viewBox="0 0 10 18"><path d="M1.5 6.5L5 3L8.5 6.5M1.5 11.5L5 15L8.5 11.5" stroke="#bdbdbd" fill="none" stroke-width="1.1"/></svg><svg class="a" style="left:861px;top:73px;" width="10" height="8" viewBox="0 0 10 8"><path d="M1.5 2L5 5.5L8.5 2" stroke="#cfcfcf" fill="none" stroke-width="1.2"/></svg>
<div class="a" style="left:807px;top:67px;width:51px;height:19px;background:#474747"></div>
<div class="a" style="left:790px;top:66px;width:86px;height:21px;border:1px solid #444;border-radius:3px"></div>
<div class="a" style="left:791px;top:93px;width:67px;height:19px;background:#e4e4e4;border-radius:3px 0 0 3px"></div>
<div class="a" style="left:795px;top:98px;width:55px;height:8px;background:#000"></div>
<div class="a" style="left:858px;top:92px;width:18px;height:21px;border:1px solid #444;border-radius:0 3px 3px 0"></div>
<svg class="a" style="left:862px;top:99px;" width="10" height="8" viewBox="0 0 10 8"><path d="M1.5 2L5 5.5L8.5 2" stroke="#cfcfcf" fill="none" stroke-width="1.2"/></svg>
<div class="a" style="left:882px;top:66px;width:1px;height:47px;background:#464646"></div>
<svg class="a" style="left:891px;top:67px;" width="20" height="20" viewBox="0 0 20 20"><rect x="1.5" y="1.5" width="13" height="13" stroke="#c4c4c4" fill="none" stroke-dasharray="2 1.2"/><path d="M16 16l2 0l-1 1.5z" fill="#c4c4c4"/></svg>
<svg class="a" style="left:922px;top:68px;" width="14" height="16" viewBox="0 0 14 16"><rect x="1" y="1" width="12" height="12" stroke="#c4c4c4" fill="none" stroke-width="1.3"/><path d="M1 14.5h12" stroke="#777"/></svg>
<div class="a" style="left:951px;top:65px;font-family:Liberation Serif,serif;font-style:italic;font-size:16px;color:#9a9a9a;line-height:20px">fx<span style="font-size:9px">.</span></div>
<svg class="a" style="left:891px;top:98px;" width="12" height="12" viewBox="0 0 12 12"><rect x=".5" y=".5" width="11" height="11" stroke="#c4c4c4" fill="none"/><rect x="2" y="2" width="4" height="4" fill="#777"/><rect x="6" y="6" width="4" height="4" fill="#777"/></svg>
<div class="a" style="left:909px;top:92px;width:70px;height:21px;background:#474747;border:1px solid #3e3e3e;border-radius:3px"></div>
<div class="a" style="left:960px;top:93px;width:1px;height:19px;background:#3e3e3e"></div>
<div class="ui" style="left:913px;top:96px;font-size:11px;color:#ececec">100%</div>
<svg class="a" style="left:966px;top:98px;" width="8" height="10" viewBox="0 0 8 10"><path d="M2 1.5L6 5L2 8.5" stroke="#e0e0e0" stroke-width="1.3" fill="none"/></svg>
<div class="a" style="left:985px;top:66px;width:1px;height:47px;background:#464646"></div>
<div class="a" style="left:991px;top:65px;width:22px;height:22px;background:#2e2e2e;border-radius:3px"></div>
<svg class="a" style="left:994px;top:69px;" width="16" height="14" viewBox="0 0 16 14"><path d="M1 1h14M1 13h14M4 4h8M4 7h8M4 10h8" stroke="#e0e0e0" stroke-width="1.3"/><path d="M1 4h2M13 4h2M1 7h2M13 7h2M1 10h2M13 10h2" stroke="#e0e0e0"/></svg>
<svg class="a" style="left:1022px;top:69px;" width="16" height="14" viewBox="0 0 16 14"><path d="M1 1h14M1 13h14M1 4h3M1 7h3M1 10h3M12 4h3M12 7h3M12 10h3" stroke="#c4c4c4" stroke-width="1.1"/><rect x="5.5" y="3.5" width="5" height="7" stroke="#c4c4c4" fill="none"/></svg>
<svg class="a" style="left:993px;top:94px;" width="18" height="18" viewBox="0 0 18 18"><path d="M1 14h14M1 17h14M1 8h3M1 11h3" stroke="#c4c4c4" stroke-width="1.1"/><circle cx="8" cy="11" r="4" fill="#bbb"/><circle cx="13" cy="4" r="3.6" fill="#2f86ea"/></svg>
<svg class="a" style="left:1022px;top:96px;" width="16" height="14" viewBox="0 0 16 14"><path d="M1 1h14M1 13h14M1 10h14" stroke="#c4c4c4" stroke-width="1.1"/><rect x="4.5" y="3.5" width="7" height="4" fill="#c4c4c4"/></svg>
<div class="a" style="left:1046px;top:66px;width:1px;height:47px;background:#464646"></div>
<svg class="a" style="left:1054px;top:69px;" width="15" height="15" viewBox="0 0 15 15"><g fill="#2f86ea"><rect x="0" y="0" width="4" height="4"/><rect x="11" y="0" width="4" height="4"/><rect x="0" y="11" width="4" height="4"/><rect x="11" y="11" width="4" height="4"/></g><rect x="2" y="2" width="11" height="11" stroke="#9a9a9a" fill="none"/></svg>
<div class="a" style="left:1073px;top:66px;width:86px;height:21px;background:#474747;border:1px solid #3e3e3e;border-radius:3px"></div>
<div class="a" style="left:1090px;top:67px;width:1px;height:19px;background:#3e3e3e"></div>
<svg class="a" style="left:1077px;top:67px;" width="10" height="18" viewBox="0 0 10 18"><path d="M1.5 6.5L5 3L8.5 6.5M1.5 11.5L5 15L8.5 11.5" stroke="#dcdcdc" fill="none" stroke-width="1.1"/></svg>
<div class="ui" style="left:1095px;top:69px;font-size:11.4px;color:#ececec">0.1667 in</div>
<div class="a" style="left:1074px;top:93px;width:67px;height:19px;background:#e4e4e4"></div>
<div class="a" style="left:1076px;top:96px;width:58px;height:14px;border-top:1.5px solid #111;border-right:1.5px solid #111"></div>
<div class="a" style="left:1141px;top:92px;width:18px;height:21px;border:1px solid #3e3e3e;border-radius:0 3px 3px 0;background:#535353"></div>
<svg class="a" style="left:1145px;top:99px;" width="10" height="8" viewBox="0 0 10 8"><path d="M1.5 2L5 5.5L8.5 2" stroke="#cfcfcf" fill="none" stroke-width="1.2"/></svg>
<div class="a" style="left:1166px;top:66px;width:1px;height:47px;background:#464646"></div>
<svg class="a" style="left:1178px;top:67px;" width="18" height="18" viewBox="0 0 18 18"><rect x="2" y="2" width="11" height="11" stroke="#c4c4c4" fill="none" stroke-dasharray="1.5 1"/><g fill="#c4c4c4"><rect x="0" y="0" width="3" height="3"/><rect x="12" y="0" width="3" height="3"/><rect x="0" y="12" width="3" height="3"/><rect x="12" y="12" width="3" height="3"/></g><path d="M15 16l3 0l-1.5 1.5z" fill="#c4c4c4"/></svg>
<div class="a" style="left:1206px;top:66px;width:183px;height:21px;border:1px solid #3e3e3e;border-radius:3px;background:#535353"></div>
<div class="a" style="left:1207px;top:67px;width:163px;height:19px;background:#e4e4e4"></div>
<div class="ui" style="left:1214px;top:69px;font-size:11.2px;color:#1a1a1a">[Basic Graphics Frame]+</div>
<svg class="a" style="left:1374px;top:74px;" width="10" height="8" viewBox="0 0 10 8"><path d="M1.5 2L5 5.5L8.5 2" stroke="#e0e0e0" fill="none" stroke-width="1.3"/></svg>
<svg class="a" style="left:1337px;top:95px;" width="22" height="14" viewBox="0 0 22 14"><rect x="1" y="1" width="8" height="8" stroke="#c4c4c4" fill="none"/><rect x="4" y="4" width="8" height="8" fill="#2e2e2e" stroke="#c4c4c4"/><path d="M15 9a3 3 0 1 1 3 3M14 7l1 2l2-1" stroke="#777" fill="none"/></svg>
<svg class="a" style="left:1366px;top:95px;" width="20" height="14" viewBox="0 0 20 14"><rect x="1.5" y="2.5" width="10" height="10" stroke="#c4c4c4" fill="none" stroke-dasharray="1.5 1"/><path d="M13 8l6-6M15 4l3 1" stroke="#c4c4c4"/></svg>
<div class="a" style="left:1393px;top:66px;width:1px;height:47px;background:#464646"></div>
<div class="a" style="left:2019px;top:66px;width:1px;height:47px;background:#464646"></div>
<svg class="a" style="left:1997px;top:79px;" width="12" height="16" viewBox="0 0 12 16"><path d="M8 0L2 9h4l-2 7l6-9H6Z" fill="#b8b8b8"/></svg>
<svg class="a" style="left:2027px;top:69px;" width="13" height="13" viewBox="0 0 13 13"><circle cx="6.5" cy="6.5" r="6" stroke="#bdbdbd" stroke-width="2.6" fill="none" stroke-dasharray="2.2 2.5"/><circle cx="6.5" cy="6.5" r="4.2" fill="#bdbdbd"/><circle cx="6.5" cy="6.5" r="1.8" fill="#535353"/></svg>
<svg class="a" style="left:2027px;top:98px;" width="12" height="9" viewBox="0 0 12 9"><path d="M0 1H12M0 4.5H12M0 8H12" stroke="#bdbdbd" stroke-width="1"/></svg>
<div class="ui" style="left:56px;top:128px;font-size:10px;color:#e6e6e6">&#x2715;</div>
<div class="ui" style="left:73px;top:127.5px;font-size:11.5px;font-weight:bold;color:#f2f2f2;letter-spacing:-.4px">*Personal Branding Brochure Template IDCS4.indd @ 90%</div>
<div class="ui" style="left:396px;top:128px;font-size:10px;color:#bdbdbd">&#x2715;</div>
<div class="ui" style="left:413px;top:127.5px;font-size:11.5px;color:#bdbdbd;letter-spacing:-.2px">*RCP_Personal Branding Brochure.indd @ 91% [Converted]</div>
<svg class="a" style="left:58px;top:149px;" width="1807" height="15" viewBox="0 0 1807 15"><g fill="#bdbdbd"><rect x="3.8" y="9" width="1" height="6"/><rect x="13.6" y="13" width="1" height="2"/><rect x="23.4" y="11" width="1" height="4"/><rect x="33.2" y="13" width="1" height="2"/><rect x="43.0" y="0" width="1" height="15"/><rect x="52.8" y="13" width="1" height="2"/><rect x="62.6" y="11" width="1" height="4"/><rect x="72.4" y="13" width="1" height="2"/><rect x="82.2" y="9" width="1" height="6"/><rect x="92.0" y="13" width="1" height="2"/><rect x="101.8" y="11" width="1" height="4"/><rect x="111.6" y="13" width="1" height="2"/><rect x="121.4" y="0" width="1" height="15"/><rect x="131.3" y="13" width="1" height="2"/><rect x="141.1" y="11" width="1" height="4"/><rect x="150.9" y="13" width="1" height="2"/><rect x="160.7" y="9" width="1" height="6"/><rect x="170.5" y="13" width="1" height="2"/><rect x="180.3" y="11" width="1" height="4"/><rect x="190.1" y="13" width="1" height="2"/><rect x="199.9" y="0" width="1" height="15"/><rect x="209.7" y="13" width="1" height="2"/><rect x="219.5" y="11" width="1" height="4"/><rect x="229.3" y="13" width="1" height="2"/><rect x="239.1" y="9" width="1" height="6"/><rect x="248.9" y="13" width="1" height="2"/><rect x="258.7" y="11" width="1" height="4"/><rect x="268.5" y="13" width="1" height="2"/><rect x="278.4" y="0" width="1" height="15"/><rect x="288.2" y="13" width="1" height="2"/><rect x="298.0" y="11" width="1" height="4"/><rect x="307.8" y="13" width="1" height="2"/><rect x="317.6" y="9" width="1" height="6"/><rect x="327.4" y="13" width="1" height="2"/><rect x="337.2" y="11" width="1" height="4"/><rect x="347.0" y="13" width="1" height="2"/><rect x="356.8" y="0" width="1" height="15"/><rect x="366.6" y="13" width="1" height="2"/><rect x="376.4" y="11" width="1" height="4"/><rect x="386.2" y="13" width="1" height="2"/><rect x="396.0" y="9" width="1" height="6"/><rect x="405.8" y="13" width="1" height="2"/><rect x="415.6" y="11" width="1" height="4"/><rect x="425.4" y="13" width="1" height="2"/><rect x="435.2" y="0" width="1" height="15"/><rect x="445.1" y="13" width="1" height="2"/><rect x="454.9" y="11" width="1" height="4"/><rect x="464.7" y="13" width="1" height="2"/><rect x="474.5" y="9" width="1" height="6"/><rect x="484.3" y="13" width="1" height="2"/><rect x="494.1" y="11" width="1" height="4"/><rect x="503.9" y="13" width="1" height="2"/><rect x="513.7" y="0" width="1" height="15"/><rect x="523.5" y="13" width="1" height="2"/><rect x="533.3" y="11" width="1" height="4"/><rect x="543.1" y="13" width="1" height="2"/><rect x="552.9" y="9" width="1" height="6"/><rect x="562.7" y="13" width="1" height="2"/><rect x="572.5" y="11" width="1" height="4"/><rect x="582.3" y="13" width="1" height="2"/><rect x="592.1" y="0" width="1" height="15"/><rect x="602.0" y="13" width="1" height="2"/><rect x="611.8" y="11" width="1" height="4"/><rect x="621.6" y="13" width="1" height="2"/><rect x="631.4" y="9" width="1" height="6"/><rect x="641.2" y="13" width="1" height="2"/><rect x="651.0" y="11" width="1" height="4"/><rect x="660.8" y="13" width="1" height="2"/><rect x="670.6" y="0" width="1" height="15"/><rect x="680.4" y="13" width="1" height="2"/><rect x="690.2" y="11" width="1" height="4"/><rect x="700.0" y="13" width="1" height="2"/><rect x="709.8" y="9" width="1" height="6"/><rect x="719.6" y="13" width="1" height="2"/><rect x="729.4" y="11" width="1" height="4"/><rect x="739.2" y="13" width="1" height="2"/><rect x="749.1" y="0" width="1" height="15"/><rect x="758.9" y="13" width="1" height="2"/><rect x="768.7" y="11" width="1" height="4"/><rect x="778.5" y="13" width="1" height="2"/><rect x="788.3" y="9" width="1" height="6"/><rect x="798.1" y="13" width="1" height="2"/><rect x="807.9" y="11" width="1" height="4"/><rect x="817.7" y="13" width="1" height="2"/><rect x="827.5" y="0" width="1" height="15"/><rect x="837.3" y="13" width="1" height="2"/><rect x="847.1" y="11" width="1" height="4"/><rect x="856.9" y="13" width="1" height="2"/><rect x="866.7" y="9" width="1" height="6"/><rect x="876.5" y="13" width="1" height="2"/><rect x="886.3" y="11" width="1" height="4"/><rect x="896.1" y="13" width="1" height="2"/><rect x="906.0" y="0" width="1" height="15"/><rect x="915.8" y="13" width="1" height="2"/><rect x="925.6" y="11" width="1" height="4"/><rect x="935.4" y="13" width="1" height="2"/><rect x="945.2" y="9" width="1" height="6"/><rect x="955.0" y="13" width="1" height="2"/><rect x="964.8" y="11" width="1" height="4"/><rect x="974.6" y="13" width="1" height="2"/><rect x="984.4" y="0" width="1" height="15"/><rect x="994.2" y="13" width="1" height="2"/><rect x="1004.0" y="11" width="1" height="4"/><rect x="1013.8" y="13" width="1" height="2"/><rect x="1023.6" y="9" width="1" height="6"/><rect x="1033.4" y="13" width="1" height="2"/><rect x="1043.2" y="11" width="1" height="4"/><rect x="1053.0" y="13" width="1" height="2"/><rect x="1062.8" y="0" width="1" height="15"/><rect x="1072.7" y="13" width="1" height="2"/><rect x="1082.5" y="11" width="1" height="4"/><rect x="1092.3" y="13" width="1" height="2"/><rect x="1102.1" y="9" width="1" height="6"/><rect x="1111.9" y="13" width="1" height="2"/><rect x="1121.7" y="11" width="1" height="4"/><rect x="1131.5" y="13" width="1" height="2"/><rect x="1141.3" y="0" width="1" height="15"/><rect x="1151.1" y="13" width="1" height="2"/><rect x="1160.9" y="11" width="1" height="4"/><rect x="1170.7" y="13" width="1" height="2"/><rect x="1180.5" y="9" width="1" height="6"/><rect x="1190.3" y="13" width="1" height="2"/><rect x="1200.1" y="11" width="1" height="4"/><rect x="1209.9" y="13" width="1" height="2"/><rect x="1219.8" y="0" width="1" height="15"/><rect x="1229.6" y="13" width="1" height="2"/><rect x="1239.4" y="11" width="1" height="4"/><rect x="1249.2" y="13" width="1" height="2"/><rect x="1259.0" y="9" width="1" height="6"/><rect x="1268.8" y="13" width="1" height="2"/><rect x="1278.6" y="11" width="1" height="4"/><rect x="1288.4" y="13" width="1" height="2"/><rect x="1298.2" y="0" width="1" height="15"/><rect x="1308.0" y="13" width="1" height="2"/><rect x="1317.8" y="11" width="1" height="4"/><rect x="1327.6" y="13" width="1" height="2"/><rect x="1337.4" y="9" width="1" height="6"/><rect x="1347.2" y="13" width="1" height="2"/><rect x="1357.0" y="11" width="1" height="4"/><rect x="1366.8" y="13" width="1" height="2"/><rect x="1376.7" y="0" width="1" height="15"/><rect x="1386.5" y="13" width="1" height="2"/><rect x="1396.3" y="11" width="1" height="4"/><rect x="1406.1" y="13" width="1" height="2"/><rect x="1415.9" y="9" width="1" height="6"/><rect x="1425.7" y="13" width="1" height="2"/><rect x="1435.5" y="11" width="1" height="4"/><rect x="1445.3" y="13" width="1" height="2"/><rect x="1455.1" y="0" width="1" height="15"/><rect x="1464.9" y="13" width="1" height="2"/><rect x="1474.7" y="11" width="1" height="4"/><rect x="1484.5" y="13" width="1" height="2"/><rect x="1494.3" y="9" width="1" height="6"/><rect x="1504.1" y="13" width="1" height="2"/><rect x="1513.9" y="11" width="1" height="4"/><rect x="1523.7" y="13" width="1" height="2"/><rect x="1533.5" y="0" width="1" height="15"/><rect x="1543.4" y="13" width="1" height="2"/><rect x="1553.2" y="11" width="1" height="4"/><rect x="1563.0" y="13" width="1" height="2"/><rect x="1572.8" y="9" width="1" height="6"/><rect x="1582.6" y="13" width="1" height="2"/><rect x="1592.4" y="11" width="1" height="4"/><rect x="1602.2" y="13" width="1" height="2"/><rect x="1612.0" y="0" width="1" height="15"/><rect x="1621.8" y="13" width="1" height="2"/><rect x="1631.6" y="11" width="1" height="4"/><rect x="1641.4" y="13" width="1" height="2"/><rect x="1651.2" y="9" width="1" height="6"/><rect x="1661.0" y="13" width="1" height="2"/><rect x="1670.8" y="11" width="1" height="4"/><rect x="1680.6" y="13" width="1" height="2"/><rect x="1690.5" y="0" width="1" height="15"/><rect x="1700.3" y="13" width="1" height="2"/><rect x="1710.1" y="11" width="1" height="4"/><rect x="1719.9" y="13" width="1" height="2"/><rect x="1729.7" y="9" width="1" height="6"/><rect x="1739.5" y="13" width="1" height="2"/><rect x="1749.3" y="11" width="1" height="4"/><rect x="1759.1" y="13" width="1" height="2"/><rect x="1768.9" y="0" width="1" height="15"/><rect x="1778.7" y="13" width="1" height="2"/><rect x="1788.5" y="11" width="1" height="4"/><rect x="1798.3" y="13" width="1" height="2"/></g><g fill="#e6e6e6" font-family="Liberation Sans" font-size="11"><text x="46.0" y="10.5">0</text><text x="124.4" y="10.5">1</text><text x="202.9" y="10.5">2</text><text x="281.4" y="10.5">3</text><text x="359.8" y="10.5">4</text><text x="438.2" y="10.5">5</text><text x="516.7" y="10.5">6</text><text x="595.1" y="10.5">7</text><text x="673.6" y="10.5">8</text><text x="752.1" y="10.5">9</text><text x="830.5" y="10.5">10</text><text x="909.0" y="10.5">11</text><text x="987.4" y="10.5">12</text><text x="1065.8" y="10.5">13</text><text x="1144.3" y="10.5">14</text><text x="1222.8" y="10.5">15</text><text x="1301.2" y="10.5">16</text><text x="1379.7" y="10.5">17</text><text x="1458.1" y="10.5">18</text><text x="1536.5" y="10.5">19</text><text x="1615.0" y="10.5">20</text><text x="1693.5" y="10.5">21</text><text x="1771.9" y="10.5">22</text></g></svg>
<svg class="a" style="left:42px;top:149px;" width="16" height="16" viewBox="0 0 16 16"><path d="M0 4.5H15M4.5 0V15" stroke="#d0d0d0" stroke-dasharray="1 1.5"/><rect x="15" y="0" width="1" height="15" fill="#bdbdbd"/><rect x="0" y="15" width="16" height="1" fill="#bdbdbd"/></svg>
<svg class="a" style="left:42px;top:164px;" width="16" height="898" viewBox="0 0 16 898"><g fill="#bdbdbd"><rect x="12" y="8.9" width="4" height="1"/><rect x="14" y="18.7" width="2" height="1"/><rect x="0" y="28.5" width="16" height="1"/><rect x="14" y="38.3" width="2" height="1"/><rect x="12" y="48.1" width="4" height="1"/><rect x="14" y="57.9" width="2" height="1"/><rect x="10" y="67.7" width="6" height="1"/><rect x="14" y="77.5" width="2" height="1"/><rect x="12" y="87.3" width="4" height="1"/><rect x="14" y="97.1" width="2" height="1"/><rect x="0" y="106.9" width="16" height="1"/><rect x="14" y="116.8" width="2" height="1"/><rect x="12" y="126.6" width="4" height="1"/><rect x="14" y="136.4" width="2" height="1"/><rect x="10" y="146.2" width="6" height="1"/><rect x="14" y="156.0" width="2" height="1"/><rect x="12" y="165.8" width="4" height="1"/><rect x="14" y="175.6" width="2" height="1"/><rect x="0" y="185.4" width="16" height="1"/><rect x="14" y="195.2" width="2" height="1"/><rect x="12" y="205.0" width="4" height="1"/><rect x="14" y="214.8" width="2" height="1"/><rect x="10" y="224.6" width="6" height="1"/><rect x="14" y="234.4" width="2" height="1"/><rect x="12" y="244.2" width="4" height="1"/><rect x="14" y="254.0" width="2" height="1"/><rect x="0" y="263.9" width="16" height="1"/><rect x="14" y="273.7" width="2" height="1"/><rect x="12" y="283.5" width="4" height="1"/><rect x="14" y="293.3" width="2" height="1"/><rect x="10" y="303.1" width="6" height="1"/><rect x="14" y="312.9" width="2" height="1"/><rect x="12" y="322.7" width="4" height="1"/><rect x="14" y="332.5" width="2" height="1"/><rect x="0" y="342.3" width="16" height="1"/><rect x="14" y="352.1" width="2" height="1"/><rect x="12" y="361.9" width="4" height="1"/><rect x="14" y="371.7" width="2" height="1"/><rect x="10" y="381.5" width="6" height="1"/><rect x="14" y="391.3" width="2" height="1"/><rect x="12" y="401.1" width="4" height="1"/><rect x="14" y="410.9" width="2" height="1"/><rect x="0" y="420.8" width="16" height="1"/><rect x="14" y="430.6" width="2" height="1"/><rect x="12" y="440.4" width="4" height="1"/><rect x="14" y="450.2" width="2" height="1"/><rect x="10" y="460.0" width="6" height="1"/><rect x="14" y="469.8" width="2" height="1"/><rect x="12" y="479.6" width="4" height="1"/><rect x="14" y="489.4" width="2" height="1"/><rect x="0" y="499.2" width="16" height="1"/><rect x="14" y="509.0" width="2" height="1"/><rect x="12" y="518.8" width="4" height="1"/><rect x="14" y="528.6" width="2" height="1"/><rect x="10" y="538.4" width="6" height="1"/><rect x="14" y="548.2" width="2" height="1"/><rect x="12" y="558.0" width="4" height="1"/><rect x="14" y="567.8" width="2" height="1"/><rect x="0" y="577.6" width="16" height="1"/><rect x="14" y="587.5" width="2" height="1"/><rect x="12" y="597.3" width="4" height="1"/><rect x="14" y="607.1" width="2" height="1"/><rect x="10" y="616.9" width="6" height="1"/><rect x="14" y="626.7" width="2" height="1"/><rect x="12" y="636.5" width="4" height="1"/><rect x="14" y="646.3" width="2" height="1"/><rect x="0" y="656.1" width="16" height="1"/><rect x="14" y="665.9" width="2" height="1"/><rect x="12" y="675.7" width="4" height="1"/><rect x="14" y="685.5" width="2" height="1"/><rect x="10" y="695.3" width="6" height="1"/><rect x="14" y="705.1" width="2" height="1"/><rect x="12" y="714.9" width="4" height="1"/><rect x="14" y="724.7" width="2" height="1"/><rect x="0" y="734.6" width="16" height="1"/><rect x="14" y="744.4" width="2" height="1"/><rect x="12" y="754.2" width="4" height="1"/><rect x="14" y="764.0" width="2" height="1"/><rect x="10" y="773.8" width="6" height="1"/><rect x="14" y="783.6" width="2" height="1"/><rect x="12" y="793.4" width="4" height="1"/><rect x="14" y="803.2" width="2" height="1"/><rect x="0" y="813.0" width="16" height="1"/><rect x="14" y="822.8" width="2" height="1"/><rect x="12" y="832.6" width="4" height="1"/><rect x="14" y="842.4" width="2" height="1"/><rect x="10" y="852.2" width="6" height="1"/><rect x="14" y="862.0" width="2" height="1"/><rect x="12" y="871.8" width="4" height="1"/><rect x="14" y="881.6" width="2" height="1"/><rect x="0" y="891.5" width="16" height="1"/></g><g fill="#e6e6e6" font-family="Liberation Sans" font-size="11"><text x="3" y="39.5">0</text><text x="3" y="117.9">1</text><text x="3" y="196.4">2</text><text x="3" y="274.9">3</text><text x="3" y="353.3">4</text><text x="3" y="431.8">5</text><text x="3" y="510.2">6</text><text x="3" y="588.6">7</text><text x="3" y="667.1">8</text><text x="3" y="745.6">9</text><text x="3" y="824.0">1</text><text x="3" y="833.0">0</text><text x="3" y="902.5">1</text><text x="3" y="911.5">1</text></g></svg>
<div class="a" style="left:0;top:119px;width:39px;height:12px;background:#424242"></div>
<svg class="a" style="left:3px;top:121px;" width="12" height="8" viewBox="0 0 12 8"><path d="M1.5 1.5L4 4L1.5 6.5M6.5 1.5L9 4L6.5 6.5" stroke="#c8c8c8" fill="none" stroke-width="1"/></svg>
<div class="a" style="left:10px;top:135px;width:20px;height:4px;background:repeating-linear-gradient(90deg,#2f2f2f 0 1px,transparent 1px 2.5px)"></div>
<div class="a" style="left:6px;top:147px;width:28px;height:22px;background:#383838;border-radius:3px"></div>
<svg class="a" style="left:11px;top:149px;" width="18" height="18" viewBox="0 0 18 18"><path d="M5 2L5 16L8.5 12.5L11 17.5L13 16.5L10.5 11.5L15 11.5Z" fill="#c4c4c4"/></svg>
<svg class="a" style="left:11px;top:173px;" width="18" height="18" viewBox="0 0 18 18"><path d="M5 2L5 16L8.5 12.5L11 17.5L13 16.5L10.5 11.5L15 11.5Z" fill="none" stroke="#c4c4c4" stroke-width="1.2"/></svg>
<svg class="a" style="left:11px;top:196px;" width="18" height="18" viewBox="0 0 18 18"><path d="M3 2h7l4 4v4M3 2v14h7" stroke="#c4c4c4" fill="none" stroke-width="1.3"/><path d="M10 9v8l2-2l2 3l1-1l-2-3h3z" fill="#c4c4c4"/></svg>
<svg class="a" style="left:11px;top:220px;" width="18" height="18" viewBox="0 0 18 18"><path d="M2 3v12M16 3v12M4 9h10M7 6l-3 3l3 3M11 6l3 3l-3 3" stroke="#c4c4c4" fill="none" stroke-width="1.5"/></svg>
<svg class="a" style="left:11px;top:245px;" width="18" height="18" viewBox="0 0 18 18"><path d="M2 8v8h14V8" stroke="#c4c4c4" fill="none" stroke-width="1.6"/><path d="M9 1v7M6.5 5.5L9 8l2.5-2.5" stroke="#c4c4c4" fill="none" stroke-width="1.4"/><path d="M4 11h2M8 11h2M12 11h2M4 13.5h2M8 13.5h2M12 13.5h2" stroke="#c4c4c4" stroke-width="1.4"/></svg>
<div class="a" style="left:0;top:267px;width:39px;height:1px;background:#474747"></div>
<div class="a" style="left:11px;top:272px;font-family:Liberation Serif,serif;font-size:20px;color:#c4c4c4;line-height:18px">T</div>
<svg class="a" style="left:11px;top:296px;" width="18" height="18" viewBox="0 0 18 18"><path d="M2 16L16 2" stroke="#c4c4c4" stroke-width="1.5"/></svg>
<svg class="a" style="left:11px;top:320px;" width="18" height="18" viewBox="0 0 18 18"><path d="M3 15l2-6l6-6l4 4l-6 6z M3 15l4-4" fill="#c4c4c4" stroke="#c4c4c4"/><circle cx="8" cy="10" r="1" fill="#535353"/></svg>
<svg class="a" style="left:11px;top:344px;" width="18" height="18" viewBox="0 0 18 18"><path d="M3 15l1-4l9-9l3 3l-9 9z" fill="#c4c4c4"/></svg>
<svg class="a" style="left:11px;top:368px;" width="18" height="18" viewBox="0 0 18 18"><rect x="2" y="2" width="14" height="14" stroke="#c4c4c4" fill="none" stroke-width="1.3"/><path d="M2 2L16 16M16 2L2 16" stroke="#c4c4c4" stroke-width="1.2"/></svg>
<svg class="a" style="left:11px;top:392px;" width="18" height="18" viewBox="0 0 18 18"><rect x="2" y="3" width="14" height="12" stroke="#c4c4c4" fill="none" stroke-width="1.3"/></svg>
<div class="a" style="left:0;top:415px;width:39px;height:1px;background:#474747"></div>
<svg class="a" style="left:11px;top:419px;" width="18" height="18" viewBox="0 0 18 18"><circle cx="4" cy="13" r="2.5" stroke="#c4c4c4" fill="none" stroke-width="1.3"/><circle cx="14" cy="13" r="2.5" stroke="#c4c4c4" fill="none" stroke-width="1.3"/><path d="M5 11L15 3M13 11L3 3" stroke="#c4c4c4" stroke-width="1.3"/></svg>
<svg class="a" style="left:11px;top:443px;" width="18" height="18" viewBox="0 0 18 18"><path d="M2 2v11l3-3l3 5l2-1l-3-5h4z" fill="#c4c4c4"/><rect x="6" y="5" width="11" height="11" stroke="#c4c4c4" fill="none" stroke-dasharray="2 1.5"/></svg>
<div class="a" style="left:12px;top:468px;width:15px;height:15px;background:linear-gradient(90deg,#111,#eee)"></div>
<div class="a" style="left:11px;top:492px;width:17px;height:15px;background:repeating-conic-gradient(#c4c4c4 0 25%,#535353 0 50%) 0 0/5px 5px"></div>
<svg class="a" style="left:11px;top:517px;" width="18" height="18" viewBox="0 0 18 18"><path d="M3 2h12v14H3z" fill="#c4c4c4"/><path d="M6 6h6M6 9h6M6 12h4" stroke="#535353" stroke-width="1.3"/></svg>
<svg class="a" style="left:11px;top:542px;" width="18" height="18" viewBox="0 0 18 18"><path d="M3 16l1-3l7-7l2 2l-7 7z" stroke="#c4c4c4" fill="none" stroke-width="1.3"/><path d="M10 5l2-2a2 2 0 0 1 3 3l-2 2z" fill="#c4c4c4"/></svg>
<svg class="a" style="left:11px;top:566px;" width="18" height="18" viewBox="0 0 18 18"><path d="M5 9V4a1 1 0 0 1 2 0v4V2.5a1 1 0 0 1 2 0V8V3a1 1 0 0 1 2 0v5V5a1 1 0 0 1 2 0v6c0 4-2 6-5 6s-4-2-6-5l-1.5-3a1 1 0 0 1 2-1z" fill="#c4c4c4"/></svg>
<svg class="a" style="left:11px;top:590px;" width="18" height="18" viewBox="0 0 18 18"><circle cx="7.5" cy="7.5" r="5" stroke="#c4c4c4" fill="none" stroke-width="1.6"/><path d="M11 11L16 16" stroke="#c4c4c4" stroke-width="2"/></svg>
<svg class="a" style="left:6px;top:615px;" width="12" height="12" viewBox="0 0 12 12"><rect x="1" y="1" width="7" height="7" fill="#fff" stroke="#222"/><rect x="4" y="4" width="7" height="7" fill="#222" stroke="#fff"/></svg>
<svg class="a" style="left:24px;top:616px;" width="12" height="12" viewBox="0 0 12 12"><path d="M2 7a4 4 0 0 1 7-3M7 2l2 2l-2 2M10 5a4 4 0 0 1-1 5" stroke="#c4c4c4" fill="none" stroke-width="1.3"/></svg>
<div class="a" style="left:15px;top:644px;width:19px;height:19px;background:#fff;border:1px solid #333"></div>
<svg class="a" style="left:15px;top:644px;" width="19" height="19" viewBox="0 0 19 19"><rect x="4.5" y="4.5" width="10" height="10" fill="#fff" stroke="#222"/><path d="M1 18L18 1" stroke="#e8141c" stroke-width="2"/></svg>
<div class="a" style="left:6px;top:635px;width:19px;height:19px;background:#7a7a7a;border:1px solid #999"></div>
<svg class="a" style="left:7px;top:669px;" width="12" height="12" viewBox="0 0 12 12"><rect x="1.5" y="1.5" width="9" height="9" stroke="#c4c4c4" fill="none" stroke-width="1.3"/></svg>
<div class="a" style="left:23px;top:667px;font-family:Liberation Serif,serif;font-weight:bold;font-size:12px;color:#c4c4c4;line-height:14px">T</div>
<div class="a" style="left:6px;top:689px;width:28px;height:23px;background:#383838;border-radius:3px"></div>
<div class="a" style="left:11px;top:693px;width:18px;height:14px;background:#777;border:1px solid #aaa"></div>
<svg class="a" style="left:11px;top:719px;" width="18" height="18" viewBox="0 0 18 18"><rect x="4" y="5" width="11" height="8" stroke="#c4c4c4" fill="none" stroke-dasharray="2 1.2"/><path d="M2 3h3M3 1v4" stroke="#c4c4c4"/><path d="M15 16l2 0l-1 1.5z" fill="#c4c4c4"/></svg>
<div class="a" style="left:6px;top:745px;width:28px;height:23px;background:#383838;border-radius:3px"></div>
<svg class="a" style="left:11px;top:750px;" width="18" height="14" viewBox="0 0 18 14"><rect x="1" y="1" width="15" height="11" stroke="#c4c4c4" fill="none" stroke-width="1.3"/><path d="M1 4h15" stroke="#c4c4c4" stroke-width="1.3"/></svg>
<div class="a" style="left:42px;top:1062px;width:514px;height:16px;background:#4c4c4c"></div>
<div class="a" style="left:556px;top:1062px;width:1309px;height:16px;background:#474747"></div>
<div class="a" style="left:862px;top:1063px;width:884px;height:16px;background:#626262;border-radius:8px"></div>
<div class="ui" style="left:56px;top:1063px;font-size:11.5px;color:#e6e6e6;line-height:14px">90.21%</div>
<svg class="a" style="left:98px;top:1067px;" width="10" height="8" viewBox="0 0 10 8"><path d="M1.5 2L5 5.5L8.5 2" stroke="#cfcfcf" fill="none" stroke-width="1.2"/></svg>
<svg class="a" style="left:118px;top:1065px;" width="10" height="10" viewBox="0 0 10 10"><path d="M1.5 1v8" stroke="#bdbdbd" stroke-width="1.4"/><path d="M9 1L4 5L9 9Z" fill="#bdbdbd"/></svg>
<svg class="a" style="left:140px;top:1065px;" width="8" height="10" viewBox="0 0 8 10"><path d="M7 1L2 5L7 9Z" fill="#bdbdbd"/></svg>
<div class="a" style="left:158px;top:1063px;width:90px;height:14px;background:#3a3a3a;border:1px solid #5a5a5a;border-radius:2px"></div>
<div class="a" style="left:230px;top:1064px;width:1px;height:12px;background:#5a5a5a"></div>
<div class="ui" style="left:163px;top:1063px;font-size:11.5px;color:#e6e6e6;line-height:14px">11</div>
<svg class="a" style="left:234px;top:1067px;" width="10" height="8" viewBox="0 0 10 8"><path d="M1.5 2L5 5.5L8.5 2" stroke="#cfcfcf" fill="none" stroke-width="1.2"/></svg>
<svg class="a" style="left:260px;top:1065px;" width="8" height="10" viewBox="0 0 8 10"><path d="M2 1L7 5L2 9Z" fill="#bdbdbd"/></svg>
<svg class="a" style="left:280px;top:1065px;" width="10" height="10" viewBox="0 0 10 10"><path d="M8.5 1v8" stroke="#bdbdbd" stroke-width="1.4"/><path d="M1 1L6 5L1 9Z" fill="#bdbdbd"/></svg>
<svg class="a" style="left:305px;top:1064px;" width="16" height="12" viewBox="0 0 16 12"><path d="M7 11a5 5 0 1 1 5-5" stroke="#bdbdbd" stroke-width="1.6" fill="none"/><path d="M7 3v4h3" stroke="#bdbdbd" stroke-width="1.3" fill="none"/><path d="M12 10l3 0l-1.5 1.5z" fill="#bdbdbd"/></svg>
<div class="ui" style="left:338px;top:1063px;font-size:11.5px;color:#e6e6e6;line-height:14px">[Basic] (working)</div>
<svg class="a" style="left:440px;top:1067px;" width="10" height="8" viewBox="0 0 10 8"><path d="M1.5 2L5 5.5L8.5 2" stroke="#cfcfcf" fill="none" stroke-width="1.2"/></svg>
<div class="a" style="left:464px;top:1065px;width:10px;height:10px;border-radius:50%;background:#e5372f"></div>
<div class="ui" style="left:480px;top:1063px;font-size:11.5px;color:#e6e6e6;line-height:14px">1 error</div>
<svg class="a" style="left:542px;top:1067px;" width="10" height="8" viewBox="0 0 10 8"><path d="M1.5 2L5 5.5L8.5 2" stroke="#cfcfcf" fill="none" stroke-width="1.2"/></svg>
<div class="a" style="left:1842px;top:1062px;width:23px;height:16px;background:#4b4b4b"></div>
<svg class="a" style="left:1847px;top:1064px;" width="16" height="12" viewBox="0 0 16 12"><rect x="1" y="1" width="14" height="10" stroke="#bdbdbd" fill="none" stroke-width="1.2"/><path d="M8 1v10" stroke="#bdbdbd" stroke-width="1.2"/></svg>
<div class="a" style="left:1437px;top:179px;width:194px;height:593px;background:#535353;border:1px solid #2e2e2e;border-radius:4px 4px 0 0;box-shadow:0 1px 5px rgba(0,0,0,.3)"></div>
<div class="a" style="left:1438px;top:180px;width:192px;height:13px;background:#3f3f3f;border-radius:3px 3px 0 0"></div>
<div class="ui" style="left:1441px;top:180px;font-size:9px;color:#c8c8c8;line-height:13px">&#x2715;</div>
<svg class="a" style="left:1615px;top:183px;" width="10" height="8" viewBox="0 0 10 8"><path d="M4.5 1.5L2 4L4.5 6.5M8.5 1.5L6 4L8.5 6.5" stroke="#c8c8c8" fill="none" stroke-width="1"/></svg>
<div class="a" style="left:1438px;top:193px;width:192px;height:26px;background:#434343"></div>
<div class="a" style="left:1438px;top:193px;width:63px;height:26px;background:#535353"></div>
<svg class="a" style="left:1444px;top:200px;" width="8" height="12" viewBox="0 0 8 12"><path d="M1 4.5 L4 1.5 L7 4.5 M1 7.5 L4 10.5 L7 7.5" stroke="#cfcfcf" stroke-width="1.1" fill="none"/></svg>
<div class="ui" style="left:1456px;top:199px;font-weight:bold;font-size:12px;color:#f0f0f0">Pages</div>
<svg class="a" style="left:1614px;top:201px;" width="12" height="10" viewBox="0 0 12 10"><path d="M0 1.5H12M0 4H12M0 6.5H12M0 9H12" stroke="#cfcfcf" stroke-width="1"/></svg>
<div class="ui" style="left:1441px;top:226px;font-size:11.5px;color:#eaeaea">[None]</div>
<div class="a" style="left:1591px;top:224px;width:18px;height:23px;background:#fff;border:1px solid #777"></div>
<div class="ui" style="left:1441px;top:255px;font-size:11.5px;color:#eaeaea">A&#8209;Master</div>
<div class="a" style="left:1573px;top:253px;width:18px;height:23px;background:#fff;border:1px solid #777"></div>
<div class="a" style="left:1591px;top:253px;width:18px;height:23px;background:#fff;border:1px solid #777"></div>
<div class="a" style="left:1438px;top:282px;width:192px;height:2px;background:#444"></div>
<div class="a" style="left:1619px;top:287px;width:11px;height:453px;background:#4a4a4a"></div>
<div class="a" style="left:1619px;top:288px;width:11px;height:448px;background:#6a6a6a;border-radius:6px"></div>
<div class="a" style="left:1536px;top:288px;width:0;height:0;border-left:6px solid transparent;border-right:6px solid transparent;border-top:6px solid #bbb"></div>
<svg class="a" style="left:1528px;top:294px;" width="29" height="35" viewBox="0 0 29 35"><rect x="0" y="0" width="29" height="35" fill="#ddd"/><rect x="1" y="1" width="27" height="33" fill="#f7f3ec"/><path d="M1 1L28 34M28 1L1 34" stroke="#e2dccf" stroke-width="0.5"/><rect x="10" y="14" width="9" height="3" fill="#ece6da"/><rect x="7" y="19" width="14" height="2" fill="#4d4d78"/><rect x="4" y="21" width="21" height="4" fill="#7ea3cc"/><rect x="4" y="26" width="21" height="1.2" fill="#4d4d78"/><rect x="13" y="27" width="3" height="1" fill="#c7a76c"/><rect x="19" y="1" width="9" height="10" fill="#fff"/><text x="19.5" y="10" font-family="Liberation Sans" font-size="11" fill="#000">A</text></svg>
<svg class="a" style="left:1500px;top:358px;" width="57" height="36" viewBox="0 0 57 36"><rect x="0" y="0" width="57" height="36" fill="#ddd"/><rect x="1" y="1" width="55" height="34" fill="#bccbdc"/><path d="M1 1L27 35M27 1L1 35" stroke="#9fb4cd" stroke-width="0.5"/><path d="M29 1L55 35M55 1L29 35" stroke="#9fb4cd" stroke-width="0.5"/><rect x="21" y="1" width="6" height="34" fill="#cfdae6"/><rect x="29" y="1" width="3" height="34" fill="#a9bbd0"/><rect x="45" y="4" width="4" height="6" fill="#4d4d78"/><rect x="31" y="23" width="18" height="2" fill="#4d4d78"/><rect x="31" y="25" width="20" height="1.5" fill="#4d4d78"/><rect x="31" y="27" width="22" height="2" fill="#c7a76c"/><rect x="1" y="1" width="9" height="10" fill="#fff"/><text x="1.5" y="10" font-family="Liberation Sans" font-size="11" fill="#000">A</text><rect x="47" y="1" width="9" height="10" fill="#fff"/><text x="47.5" y="10" font-family="Liberation Sans" font-size="11" fill="#000">A</text></svg>
<svg class="a" style="left:1500px;top:422px;" width="57" height="36" viewBox="0 0 57 36"><rect x="0" y="0" width="57" height="36" fill="#ddd"/><rect x="1" y="1" width="26" height="34" fill="#a9bdd6"/><path d="M2.0 2.0L8.666666666666666 11.333333333333334M8.666666666666666 2.0L2.0 11.333333333333334" stroke="#7f9cc2" stroke-width="0.5"/><path d="M2.0 13.333333333333334L8.666666666666666 22.666666666666668M8.666666666666666 13.333333333333334L2.0 22.666666666666668" stroke="#7f9cc2" stroke-width="0.5"/><path d="M2.0 24.666666666666668L8.666666666666666 34.0M8.666666666666666 24.666666666666668L2.0 34.0" stroke="#7f9cc2" stroke-width="0.5"/><path d="M10.666666666666666 2.0L17.333333333333332 11.333333333333334M17.333333333333332 2.0L10.666666666666666 11.333333333333334" stroke="#7f9cc2" stroke-width="0.5"/><path d="M10.666666666666666 13.333333333333334L17.333333333333332 22.666666666666668M17.333333333333332 13.333333333333334L10.666666666666666 22.666666666666668" stroke="#7f9cc2" stroke-width="0.5"/><path d="M10.666666666666666 24.666666666666668L17.333333333333332 34.0M17.333333333333332 24.666666666666668L10.666666666666666 34.0" stroke="#7f9cc2" stroke-width="0.5"/><path d="M19.333333333333332 2.0L26.0 11.333333333333334M26.0 2.0L19.333333333333332 11.333333333333334" stroke="#7f9cc2" stroke-width="0.5"/><path d="M19.333333333333332 13.333333333333334L26.0 22.666666666666668M26.0 13.333333333333334L19.333333333333332 22.666666666666668" stroke="#7f9cc2" stroke-width="0.5"/><path d="M19.333333333333332 24.666666666666668L26.0 34.0M26.0 24.666666666666668L19.333333333333332 34.0" stroke="#7f9cc2" stroke-width="0.5"/><rect x="9.2" y="1" width="1" height="34" fill="#fff" opacity=".7"/><rect x="17.8" y="1" width="1" height="34" fill="#fff" opacity=".7"/><rect x="1" y="11.8" width="26" height="1" fill="#fff" opacity=".7"/><rect x="1" y="23.2" width="26" height="1" fill="#fff" opacity=".7"/><rect x="27" y="1" width="2" height="34" fill="#fff"/><rect x="29" y="1" width="27" height="34" fill="#f4efe6"/><path d="M29 1L56 18M56 1L29 18" stroke="#e0d8c8" stroke-width="0.5"/><rect x="36" y="11" width="11" height="2" fill="#4d4d78"/><rect x="39" y="13" width="10" height="2" fill="#c7a76c"/><rect x="29" y="18" width="27" height="17" fill="#c4a36a"/><rect x="34" y="21" width="17" height="2" fill="#f3ead8"/><rect x="33" y="25" width="19" height="2" fill="#f3ead8"/><rect x="33" y="28" width="19" height="3" fill="#f3ead8"/><rect x="1" y="1" width="9" height="10" fill="#fff"/><text x="1.5" y="10" font-family="Liberation Sans" font-size="11" fill="#000">A</text><rect x="47" y="1" width="9" height="10" fill="#fff"/><text x="47.5" y="10" font-family="Liberation Sans" font-size="11" fill="#000">A</text></svg>
<svg class="a" style="left:1500px;top:486px;" width="57" height="36" viewBox="0 0 57 36"><rect x="0" y="0" width="57" height="36" fill="#ddd"/><rect x="1" y="1" width="27" height="34" fill="#f7f3ec"/><path d="M1 1L28 35M28 1L1 35" stroke="#e2dccf" stroke-width="0.5"/><rect x="11" y="15" width="7" height="3" rx="1.5" fill="#ebe2cf"/><rect x="3" y="26" width="9" height="6" fill="#4f4f7a"/><rect x="28" y="1" width="28" height="34" fill="#eef1f5"/><rect x="30" y="2" width="22" height="30" fill="#a9bdd6"/><path d="M31.0 3.0L40.0 16.0M40.0 3.0L31.0 16.0" stroke="#7f9cc2" stroke-width="0.5"/><path d="M31.0 18.0L40.0 31.0M40.0 18.0L31.0 31.0" stroke="#7f9cc2" stroke-width="0.5"/><path d="M42.0 3.0L51.0 16.0M51.0 3.0L42.0 16.0" stroke="#7f9cc2" stroke-width="0.5"/><path d="M42.0 18.0L51.0 31.0M51.0 18.0L42.0 31.0" stroke="#7f9cc2" stroke-width="0.5"/><rect x="40.5" y="2" width="1" height="30" fill="#fff" opacity=".7"/><rect x="30" y="16.5" width="22" height="1" fill="#fff" opacity=".7"/><rect x="1" y="1" width="9" height="10" fill="#fff"/><text x="1.5" y="10" font-family="Liberation Sans" font-size="11" fill="#000">A</text><rect x="47" y="1" width="9" height="10" fill="#fff"/><text x="47.5" y="10" font-family="Liberation Sans" font-size="11" fill="#000">A</text></svg>
<svg class="a" style="left:1500px;top:550px;" width="57" height="36" viewBox="0 0 57 36"><rect x="0" y="0" width="57" height="36" fill="#ddd"/><rect x="1" y="1" width="27" height="34" fill="#f4f4f6"/><rect x="2" y="5" width="12" height="1.6" fill="#5a5a82"/><rect x="2" y="8" width="10" height="1.6" fill="#c7a76c"/><rect x="2" y="11" width="14" height="1.6" fill="#5a5a82"/><rect x="2" y="14" width="11" height="1.6" fill="#c7a76c"/><rect x="2" y="17" width="13" height="1.6" fill="#5a5a82"/><rect x="2" y="20" width="12" height="1.6" fill="#c7a76c"/><rect x="2" y="23" width="14" height="1.6" fill="#5a5a82"/><rect x="2" y="26" width="10" height="1.6" fill="#c7a76c"/><rect x="2" y="29" width="13" height="1.6" fill="#5a5a82"/><rect x="2" y="32" width="9" height="1.6" fill="#c7a76c"/><rect x="14.5" y="3.5" width="12" height="30" fill="none" stroke="#3c6fc4" stroke-width="1"/><path d="M14.5 3.5L26.5 13.5M26.5 3.5L14.5 13.5" stroke="#3c6fc4" stroke-width="0.6"/><path d="M14.5 13.5L26.5 23.5M26.5 13.5L14.5 23.5" stroke="#3c6fc4" stroke-width="0.6"/><path d="M14.5 23.5L26.5 33.5M26.5 23.5L14.5 33.5" stroke="#3c6fc4" stroke-width="0.6"/><rect x="28" y="1" width="28" height="34" fill="#eef1f5"/><rect x="30" y="2" width="24" height="10" fill="#a9bdd6"/><path d="M31.0 3.0L41.0 11.0M41.0 3.0L31.0 11.0" stroke="#7f9cc2" stroke-width="0.5"/><path d="M43.0 3.0L53.0 11.0M53.0 3.0L43.0 11.0" stroke="#7f9cc2" stroke-width="0.5"/><rect x="41.5" y="2" width="1" height="10" fill="#fff" opacity=".7"/><rect x="30" y="13" width="24" height="10" fill="#a9bdd6"/><path d="M31.0 14.0L53.0 22.0M53.0 14.0L31.0 22.0" stroke="#7f9cc2" stroke-width="0.5"/><rect x="30" y="24" width="24" height="10" fill="#a9bdd6"/><path d="M31.0 25.0L37.0 33.0M37.0 25.0L31.0 33.0" stroke="#7f9cc2" stroke-width="0.5"/><path d="M39.0 25.0L45.0 33.0M45.0 25.0L39.0 33.0" stroke="#7f9cc2" stroke-width="0.5"/><path d="M47.0 25.0L53.0 33.0M53.0 25.0L47.0 33.0" stroke="#7f9cc2" stroke-width="0.5"/><rect x="37.5" y="24" width="1" height="10" fill="#fff" opacity=".7"/><rect x="45.5" y="24" width="1" height="10" fill="#fff" opacity=".7"/><rect x="1" y="1" width="9" height="10" fill="#fff"/><text x="1.5" y="10" font-family="Liberation Sans" font-size="11" fill="#000">A</text><rect x="47" y="1" width="9" height="10" fill="#fff"/><text x="47.5" y="10" font-family="Liberation Sans" font-size="11" fill="#000">A</text></svg>
<svg class="a" style="left:1500px;top:614px;" width="57" height="36" viewBox="0 0 57 36"><rect x="0" y="0" width="57" height="36" fill="#ddd"/><rect x="1" y="1" width="27" height="34" fill="#eef1f5"/><rect x="2" y="2" width="25" height="11" fill="#a9bdd6"/><path d="M3.0 3.0L13.5 12.0M13.5 3.0L3.0 12.0" stroke="#7f9cc2" stroke-width="0.5"/><path d="M15.5 3.0L26.0 12.0M26.0 3.0L15.5 12.0" stroke="#7f9cc2" stroke-width="0.5"/><rect x="14.0" y="2" width="1" height="11" fill="#fff" opacity=".7"/><rect x="2" y="14" width="25" height="10" fill="#a9bdd6"/><path d="M3.0 15.0L13.5 23.0M13.5 15.0L3.0 23.0" stroke="#7f9cc2" stroke-width="0.5"/><path d="M15.5 15.0L26.0 23.0M26.0 15.0L15.5 23.0" stroke="#7f9cc2" stroke-width="0.5"/><rect x="14.0" y="14" width="1" height="10" fill="#fff" opacity=".7"/><rect x="2" y="25" width="25" height="9" fill="#a9bdd6"/><path d="M3.0 26.0L13.5 33.0M13.5 26.0L3.0 33.0" stroke="#7f9cc2" stroke-width="0.5"/><path d="M15.5 26.0L26.0 33.0M26.0 26.0L15.5 33.0" stroke="#7f9cc2" stroke-width="0.5"/><rect x="14.0" y="25" width="1" height="9" fill="#fff" opacity=".7"/><rect x="28" y="1" width="28" height="34" fill="#6aa0dc"/><rect x="29" y="2" width="13" height="32" fill="#5b8fcf"/><path d="M30.0 3.0L34.5 9.0M34.5 3.0L30.0 9.0" stroke="#7f9cc2" stroke-width="0.5"/><path d="M30.0 11.0L34.5 17.0M34.5 11.0L30.0 17.0" stroke="#7f9cc2" stroke-width="0.5"/><path d="M30.0 19.0L34.5 25.0M34.5 19.0L30.0 25.0" stroke="#7f9cc2" stroke-width="0.5"/><path d="M30.0 27.0L34.5 33.0M34.5 27.0L30.0 33.0" stroke="#7f9cc2" stroke-width="0.5"/><path d="M36.5 3.0L41.0 9.0M41.0 3.0L36.5 9.0" stroke="#7f9cc2" stroke-width="0.5"/><path d="M36.5 11.0L41.0 17.0M41.0 11.0L36.5 17.0" stroke="#7f9cc2" stroke-width="0.5"/><path d="M36.5 19.0L41.0 25.0M41.0 19.0L36.5 25.0" stroke="#7f9cc2" stroke-width="0.5"/><path d="M36.5 27.0L41.0 33.0M41.0 27.0L36.5 33.0" stroke="#7f9cc2" stroke-width="0.5"/><rect x="35.0" y="2" width="1" height="32" fill="#8fb8e6" opacity=".7"/><rect x="29" y="9.5" width="13" height="1" fill="#8fb8e6" opacity=".7"/><rect x="29" y="17.5" width="13" height="1" fill="#8fb8e6" opacity=".7"/><rect x="29" y="25.5" width="13" height="1" fill="#8fb8e6" opacity=".7"/><rect x="43" y="2" width="12" height="32" fill="#7eb0ea"/><rect x="44" y="4" width="6" height="2" fill="#3d66b0"/><rect x="44" y="8" width="8" height="2" fill="#3d66b0"/><rect x="44" y="11" width="10" height="2" fill="#3d66b0"/><rect x="44" y="14" width="7" height="2" fill="#3d66b0"/><rect x="44" y="17" width="12" height="2" fill="#3d66b0"/><rect x="44" y="20" width="11" height="2" fill="#3d66b0"/><rect x="44" y="23" width="12" height="2" fill="#3d66b0"/><rect x="44" y="26" width="9" height="2" fill="#3d66b0"/><rect x="44" y="29" width="11" height="2" fill="#3d66b0"/><rect x="1" y="1" width="9" height="10" fill="#fff"/><text x="1.5" y="10" font-family="Liberation Sans" font-size="11" fill="#000">A</text><rect x="47" y="1" width="9" height="10" fill="#fff"/><text x="47.5" y="10" font-family="Liberation Sans" font-size="11" fill="#000">A</text></svg>
<svg class="a" style="left:1500px;top:678px;" width="29" height="36" viewBox="0 0 29 36"><rect x="0" y="0" width="29" height="36" fill="#ddd"/><rect x="1" y="1" width="27" height="34" fill="#f2f2f2"/><path d="M3 2h8v10h-8z" fill="#a9bdd6"/><path d="M3 2L11 12M11 2L3 12" stroke="#8fa9c8" stroke-width="0.5"/><rect x="15" y="8" width="10" height="5" fill="#4f4f7a"/><rect x="1" y="20" width="27" height="9" rx="1" fill="#c4a36a"/><rect x="3" y="22" width="8" height="1.5" fill="#4f4f7a"/><rect x="3" y="25" width="11" height="1.2" fill="#fff"/><rect x="13" y="31" width="4" height="3" fill="#b89a66"/><rect x="1" y="1" width="9" height="10" fill="#fff"/><text x="1.5" y="10" font-family="Liberation Sans" font-size="11" fill="#000">A</text></svg>
<div class="a" style="left:1527px;top:287px;width:1px;height:48px;background:#c8c8c8"></div>
<div class="a" style="left:1527px;top:351px;width:1px;height:49px;background:#c8c8c8"></div>
<div class="a" style="left:1527px;top:415px;width:1px;height:49px;background:#c8c8c8"></div>
<div class="a" style="left:1527px;top:479px;width:1px;height:49px;background:#c8c8c8"></div>
<div class="a" style="left:1527px;top:543px;width:1px;height:49px;background:#c8c8c8"></div>
<div class="a" style="left:1527px;top:607px;width:1px;height:43px;background:#c8c8c8"></div>
<div class="a" style="left:1527px;top:671px;width:1px;height:50px;background:#c8c8c8"></div>
<div class="ui" style="left:1537px;top:335px;font-size:12px;color:#f2f2f2">1</div>
<div class="ui" style="left:1516px;top:399px;font-size:12px;color:#f2f2f2">2&ndash;3</div>
<div class="ui" style="left:1516px;top:463px;font-size:12px;color:#f2f2f2">4&ndash;5</div>
<div class="ui" style="left:1516px;top:527px;font-size:12px;color:#f2f2f2">6&ndash;7</div>
<div class="ui" style="left:1516px;top:591px;font-size:12px;color:#f2f2f2">8&ndash;9</div>
<div class="ui" style="left:1506px;top:719px;font-size:12px;color:#f2f2f2">12</div>
<div class="a" style="left:1508px;top:655px;width:37px;height:14px;background:#2b79d8"></div>
<div class="ui" style="left:1510px;top:655px;font-size:11.5px;font-weight:bold;color:#fff;line-height:14px">10&ndash;11</div>
<div class="a" style="left:1438px;top:739px;width:192px;height:1px;background:#474747"></div>
<div class="ui" style="left:1443px;top:746px;font-size:11px;color:#f0f0f0;-webkit-text-stroke:.2px #f0f0f0">12 Pages in 7 S...</div>
<svg class="a" style="left:1537px;top:746px;" width="20" height="14" viewBox="0 0 20 14"><path d="M1 6.5h5l1.5-1.5V12H1z" stroke="#c8c8c8" fill="none" stroke-width="1"/><path d="M7.5 1.5h4l2 2V10h-6z" stroke="#c8c8c8" fill="none" stroke-width="1"/><path d="M16 11.5l2 0l-1 1.2z" fill="#c8c8c8"/></svg>
<svg class="a" style="left:1568px;top:745px;" width="14" height="14" viewBox="0 0 14 14"><rect x="1.5" y="1.5" width="11" height="11" stroke="#c8c8c8" fill="none" stroke-width="1.1"/><path d="M7 4v6M4 7h6" stroke="#c8c8c8" stroke-width="1.2"/></svg>
<svg class="a" style="left:1595px;top:745px;" width="12" height="14" viewBox="0 0 12 14"><path d="M.5 3h11M4 3V1.2h4V3M2 3.5v9.5h8V3.5M4.5 5v6.5M7.5 5v6.5" stroke="#c8c8c8" fill="none" stroke-width="1"/></svg>
<div class="a" style="left:1438px;top:764px;width:192px;height:7px;background:#484848;border-top:1px solid #333"></div>
<div class="a" style="left:1525px;top:766px;width:19px;height:4px;background:repeating-linear-gradient(90deg,#2a2a2a 0 1px,transparent 1px 2px)"></div>
<div class="a" style="left:1672px;top:447px;width:241px;height:247px;background:#535353;border:1px solid #2e2e2e;border-radius:4px 4px 0 0;box-shadow:0 1px 5px rgba(0,0,0,.3)"></div>
<div class="a" style="left:1673px;top:448px;width:239px;height:12px;background:#3f3f3f;border-radius:3px 3px 0 0"></div>
<div class="ui" style="left:1677px;top:447px;font-size:9px;color:#c8c8c8;line-height:13px">&#x2715;</div>
<svg class="a" style="left:1897px;top:450px;" width="10" height="8" viewBox="0 0 10 8"><path d="M4.5 1.5L2 4L4.5 6.5M8.5 1.5L6 4L8.5 6.5" stroke="#c8c8c8" fill="none" stroke-width="1"/></svg>
<div class="a" style="left:1673px;top:460px;width:239px;height:26px;background:#434343"></div>
<div class="a" style="left:1673px;top:460px;width:84px;height:26px;background:#535353"></div>
<svg class="a" style="left:1679px;top:467px;" width="8" height="12" viewBox="0 0 8 12"><path d="M1 4.5 L4 1.5 L7 4.5 M1 7.5 L4 10.5 L7 7.5" stroke="#cfcfcf" stroke-width="1.1" fill="none"/></svg>
<div class="ui" style="left:1691px;top:466px;font-weight:bold;font-size:12px;color:#f0f0f0">Character</div>
<svg class="a" style="left:1896px;top:468px;" width="12" height="10" viewBox="0 0 12 10"><path d="M0 1.5H12M0 4H12M0 6.5H12M0 9H12" stroke="#cfcfcf" stroke-width="1"/></svg>
<div class="a" style="left:1678px;top:493px;width:229px;height:21px;background:#474747;border:1px solid #656565;border-radius:3px"></div><div class="a" style="left:1889px;top:494px;width:1px;height:19px;background:#5e5e5e"></div><svg class="a" style="left:1893px;top:500px;" width="10" height="8" viewBox="0 0 10 8"><path d="M1.5 2L5 5.5L8.5 2" stroke="#cfcfcf" fill="none" stroke-width="1.3"/></svg><div class="ui" style="left:1704px;top:496px;font-size:11.5px;color:#ececec;line-height:14px">Minion Pro</div>
<svg class="a" style="left:1681px;top:497px;" width="22" height="14" viewBox="0 0 22 14"><circle cx="5.5" cy="5.5" r="4" stroke="#cfcfcf" fill="none" stroke-width="1.2"/><path d="M8.5 8.5L12 12M14 5l3 3l3-3" stroke="#cfcfcf" fill="none" stroke-width="1.2"/></svg>
<div class="a" style="left:1678px;top:520px;width:229px;height:19px;background:#474747;border:1px solid #656565;border-radius:3px"></div><div class="a" style="left:1889px;top:521px;width:1px;height:17px;background:#5e5e5e"></div><svg class="a" style="left:1893px;top:526px;" width="10" height="8" viewBox="0 0 10 8"><path d="M1.5 2L5 5.5L8.5 2" stroke="#cfcfcf" fill="none" stroke-width="1.3"/></svg><div class="ui" style="left:1684px;top:523px;font-size:11.5px;color:#ececec;line-height:14px">Regular</div>
<div class="a" style="left:1678px;top:545px;width:229px;height:1px;background:#474747"></div>
<div class="a" style="left:1700px;top:552px;width:86px;height:20px;background:#474747;border:1px solid #656565;border-radius:3px"></div><div class="a" style="left:1717px;top:553px;width:1px;height:18px;background:#5e5e5e"></div><svg class="a" style="left:1704px;top:554px;" width="10" height="16" viewBox="0 0 10 16"><path d="M1.5 6L5 2.5L8.5 6M1.5 10L5 13.5L8.5 10" stroke="#cfcfcf" fill="none" stroke-width="1.2"/></svg><div class="a" style="left:1768px;top:553px;width:1px;height:18px;background:#5e5e5e"></div><svg class="a" style="left:1772px;top:559px;" width="10" height="8" viewBox="0 0 10 8"><path d="M1.5 2L5 5.5L8.5 2" stroke="#cfcfcf" fill="none" stroke-width="1.3"/></svg><div class="ui" style="left:1722px;top:555px;font-size:11.5px;color:#ececec;line-height:14px">12 pt</div>
<div class="a" style="left:1821px;top:552px;width:86px;height:20px;background:#474747;border:1px solid #656565;border-radius:3px"></div><div class="a" style="left:1838px;top:553px;width:1px;height:18px;background:#5e5e5e"></div><svg class="a" style="left:1825px;top:554px;" width="10" height="16" viewBox="0 0 10 16"><path d="M1.5 6L5 2.5L8.5 6M1.5 10L5 13.5L8.5 10" stroke="#cfcfcf" fill="none" stroke-width="1.2"/></svg><div class="a" style="left:1889px;top:553px;width:1px;height:18px;background:#5e5e5e"></div><svg class="a" style="left:1893px;top:559px;" width="10" height="8" viewBox="0 0 10 8"><path d="M1.5 2L5 5.5L8.5 2" stroke="#cfcfcf" fill="none" stroke-width="1.3"/></svg><div class="ui" style="left:1843px;top:555px;font-size:11.5px;color:#ececec;line-height:14px">(14.4 pt)</div>
<div class="a" style="left:1700px;top:578px;width:86px;height:19px;background:#474747;border:1px solid #656565;border-radius:3px"></div><div class="a" style="left:1717px;top:579px;width:1px;height:17px;background:#5e5e5e"></div><svg class="a" style="left:1704px;top:580px;" width="10" height="16" viewBox="0 0 10 16"><path d="M1.5 6L5 2.5L8.5 6M1.5 10L5 13.5L8.5 10" stroke="#777" fill="none" stroke-width="1.2"/></svg><div class="a" style="left:1768px;top:579px;width:1px;height:17px;background:#5e5e5e"></div><svg class="a" style="left:1772px;top:584px;" width="10" height="8" viewBox="0 0 10 8"><path d="M1.5 2L5 5.5L8.5 2" stroke="#cfcfcf" fill="none" stroke-width="1.3"/></svg><div class="ui" style="left:1722px;top:581px;font-size:11.5px;color:#ececec;line-height:14px">Metrics</div>
<div class="a" style="left:1821px;top:578px;width:86px;height:19px;background:#474747;border:1px solid #656565;border-radius:3px"></div><div class="a" style="left:1838px;top:579px;width:1px;height:17px;background:#5e5e5e"></div><svg class="a" style="left:1825px;top:580px;" width="10" height="16" viewBox="0 0 10 16"><path d="M1.5 6L5 2.5L8.5 6M1.5 10L5 13.5L8.5 10" stroke="#cfcfcf" fill="none" stroke-width="1.2"/></svg><div class="a" style="left:1889px;top:579px;width:1px;height:17px;background:#5e5e5e"></div><svg class="a" style="left:1893px;top:584px;" width="10" height="8" viewBox="0 0 10 8"><path d="M1.5 2L5 5.5L8.5 2" stroke="#cfcfcf" fill="none" stroke-width="1.3"/></svg><div class="ui" style="left:1843px;top:581px;font-size:11.5px;color:#ececec;line-height:14px">0</div>
<div class="a" style="left:1678px;top:603px;width:229px;height:1px;background:#474747"></div>
<div class="a" style="left:1700px;top:610px;width:86px;height:19px;background:#474747;border:1px solid #656565;border-radius:3px"></div><div class="a" style="left:1717px;top:611px;width:1px;height:17px;background:#5e5e5e"></div><svg class="a" style="left:1704px;top:612px;" width="10" height="16" viewBox="0 0 10 16"><path d="M1.5 6L5 2.5L8.5 6M1.5 10L5 13.5L8.5 10" stroke="#cfcfcf" fill="none" stroke-width="1.2"/></svg><div class="a" style="left:1768px;top:611px;width:1px;height:17px;background:#5e5e5e"></div><svg class="a" style="left:1772px;top:616px;" width="10" height="8" viewBox="0 0 10 8"><path d="M1.5 2L5 5.5L8.5 2" stroke="#cfcfcf" fill="none" stroke-width="1.3"/></svg><div class="ui" style="left:1722px;top:613px;font-size:11.5px;color:#ececec;line-height:14px">100%</div>
<div class="a" style="left:1821px;top:610px;width:86px;height:19px;background:#474747;border:1px solid #656565;border-radius:3px"></div><div class="a" style="left:1838px;top:611px;width:1px;height:17px;background:#5e5e5e"></div><svg class="a" style="left:1825px;top:612px;" width="10" height="16" viewBox="0 0 10 16"><path d="M1.5 6L5 2.5L8.5 6M1.5 10L5 13.5L8.5 10" stroke="#cfcfcf" fill="none" stroke-width="1.2"/></svg><div class="a" style="left:1889px;top:611px;width:1px;height:17px;background:#5e5e5e"></div><svg class="a" style="left:1893px;top:616px;" width="10" height="8" viewBox="0 0 10 8"><path d="M1.5 2L5 5.5L8.5 2" stroke="#cfcfcf" fill="none" stroke-width="1.3"/></svg><div class="ui" style="left:1843px;top:613px;font-size:11.5px;color:#ececec;line-height:14px">100%</div>
<div class="a" style="left:1700px;top:635px;width:86px;height:20px;background:#474747;border:1px solid #656565;border-radius:3px"></div><div class="a" style="left:1717px;top:636px;width:1px;height:18px;background:#5e5e5e"></div><svg class="a" style="left:1704px;top:637px;" width="10" height="16" viewBox="0 0 10 16"><path d="M1.5 6L5 2.5L8.5 6M1.5 10L5 13.5L8.5 10" stroke="#cfcfcf" fill="none" stroke-width="1.2"/></svg><div class="ui" style="left:1722px;top:638px;font-size:11.5px;color:#ececec;line-height:14px">0 pt</div>
<div class="a" style="left:1821px;top:635px;width:86px;height:20px;background:#474747;border:1px solid #656565;border-radius:3px"></div><div class="a" style="left:1838px;top:636px;width:1px;height:18px;background:#5e5e5e"></div><svg class="a" style="left:1825px;top:637px;" width="10" height="16" viewBox="0 0 10 16"><path d="M1.5 6L5 2.5L8.5 6M1.5 10L5 13.5L8.5 10" stroke="#cfcfcf" fill="none" stroke-width="1.2"/></svg><div class="ui" style="left:1843px;top:638px;font-size:11.5px;color:#ececec;line-height:14px">0&deg;</div>
<div class="a" style="left:1678px;top:661px;width:229px;height:1px;background:#474747"></div>
<div class="ui" style="left:1703px;top:670px;font-size:11px;color:#ececec">Language:</div>
<div class="a" style="left:1758px;top:667px;width:128px;height:20px;background:#474747;border:1px solid #656565;border-radius:3px"></div><div class="ui" style="left:1764px;top:670px;font-size:11.5px;color:#ececec;line-height:14px">English: USA</div>
<svg class="a" style="left:1871px;top:674px;" width="10" height="8" viewBox="0 0 10 8"><path d="M1.5 2L5 5.5L8.5 2" stroke="#cfcfcf" fill="none" stroke-width="1.3"/></svg>
<div class="a" style="left:1679px;top:552px;font-family:Liberation Serif,serif;font-weight:bold;color:#c0c0c0;font-size:19px;line-height:20px"><span style="font-size:12px">T</span>T</div>
<div class="a" style="left:1806px;top:551px;font-family:Liberation Serif,serif;color:#c0c0c0;font-size:10px;line-height:9px;text-align:center">A<br>A</div>
<svg class="a" style="left:1799px;top:558px;" width="6" height="12" viewBox="0 0 6 12"><path d="M3 1V11M1 3L3 1L5 3M1 9L3 11L5 9" stroke="#c0c0c0" fill="none" stroke-width="1"/></svg>
<svg class="a" style="left:1805px;top:571px;" width="14" height="2" viewBox="0 0 14 2"><rect x="0" y="0" width="14" height="1" fill="#c0c0c0"/></svg>
<div class="a" style="left:1679px;top:579px;font-family:Liberation Sans,sans-serif;color:#c0c0c0;font-size:14px;line-height:16px;letter-spacing:-2px">V/A</div>
<div class="a" style="left:1799px;top:578px;width:18px;height:11px;background:#c0c0c0;color:#535353;font-weight:bold;font-size:11px;line-height:11px;text-align:center;letter-spacing:-1px">VA</div>
<svg class="a" style="left:1798px;top:591px;" width="20" height="6" viewBox="0 0 20 6"><path d="M1 3H19M4 1L1 3L4 5M16 1L19 3L16 5" stroke="#c0c0c0" fill="none" stroke-width="1.1"/></svg>
<div class="a" style="left:1680px;top:610px;font-family:Liberation Serif,serif;font-weight:bold;color:#c0c0c0;font-size:19px;line-height:20px">&#x2195;T</div>
<div class="a" style="left:1802px;top:606px;font-family:Liberation Serif,serif;font-weight:bold;color:#c0c0c0;font-size:18px;line-height:18px">T</div>
<svg class="a" style="left:1799px;top:624px;" width="20" height="6" viewBox="0 0 20 6"><path d="M1 3H19M4 1L1 3L4 5M16 1L19 3L16 5" stroke="#c0c0c0" fill="none" stroke-width="1.1"/></svg>
<div class="a" style="left:1679px;top:636px;font-family:Liberation Sans,sans-serif;color:#c0c0c0;font-size:12px;line-height:16px">A<sup style="font-size:8px">a</sup></div>
<div class="a" style="left:1800px;top:634px;font-family:Liberation Serif,serif;font-style:italic;color:#c0c0c0;font-size:20px;line-height:20px">T</div>
<div class="a" style="left:1883px;top:119px;width:165px;height:12px;background:#424242"></div>
<svg class="a" style="left:2032px;top:121px;" width="10" height="8" viewBox="0 0 10 8"><path d="M4.5 1.5L2 4L4.5 6.5M8.5 1.5L6 4L8.5 6.5" stroke="#c8c8c8" fill="none" stroke-width="1"/></svg>
<div class="a" style="left:1883px;top:131px;width:165px;height:1px;background:#3d3d3d"></div>
<div class="a" style="left:1955px;top:136px;width:20px;height:4px;background:repeating-linear-gradient(90deg,#2f2f2f 0 1px,transparent 1px 2.5px)"></div>
<div class="ui" style="left:1920px;top:149px;font-weight:bold;font-size:11.8px;color:#f0f0f0">Stroke</div>
<div class="a" style="left:1883px;top:172px;width:165px;height:1px;background:#3d3d3d"></div>
<div class="a" style="left:1955px;top:177px;width:20px;height:4px;background:repeating-linear-gradient(90deg,#2f2f2f 0 1px,transparent 1px 2.5px)"></div>
<div class="ui" style="left:1920px;top:190px;font-weight:bold;font-size:11.8px;color:#f0f0f0">Effects</div>
<div class="a" style="left:1883px;top:213px;width:165px;height:1px;background:#3d3d3d"></div>
<div class="a" style="left:1955px;top:218px;width:20px;height:4px;background:repeating-linear-gradient(90deg,#2f2f2f 0 1px,transparent 1px 2.5px)"></div>
<div class="ui" style="left:1920px;top:231px;font-weight:bold;font-size:11.8px;color:#f0f0f0">Paragraph Styles</div>
<div class="a" style="left:1883px;top:254px;width:165px;height:1px;background:#3d3d3d"></div>
<div class="a" style="left:1955px;top:259px;width:20px;height:4px;background:repeating-linear-gradient(90deg,#2f2f2f 0 1px,transparent 1px 2.5px)"></div>
<div class="ui" style="left:1920px;top:272px;font-weight:bold;font-size:11.8px;color:#f0f0f0">Links</div>
<div class="a" style="left:1883px;top:295px;width:165px;height:1px;background:#3d3d3d"></div>
<div class="a" style="left:1955px;top:300px;width:20px;height:4px;background:repeating-linear-gradient(90deg,#2f2f2f 0 1px,transparent 1px 2.5px)"></div>
<div class="ui" style="left:1920px;top:313px;font-weight:bold;font-size:11.8px;color:#f0f0f0">Layers</div>
<div class="a" style="left:1883px;top:336px;width:165px;height:1px;background:#3d3d3d"></div>
<div class="a" style="left:1955px;top:341px;width:20px;height:4px;background:repeating-linear-gradient(90deg,#2f2f2f 0 1px,transparent 1px 2.5px)"></div>
<div class="ui" style="left:1920px;top:354px;font-weight:bold;font-size:11.8px;color:#f0f0f0">Swatches</div>
<div class="a" style="left:1883px;top:377px;width:165px;height:1px;background:#3d3d3d"></div>
<svg class="a" style="left:1894px;top:148px;" width="18" height="13" viewBox="0 0 18 13"><rect x="0" y="0" width="18" height="1.2" fill="#c4c4c4"/><rect x="0" y="4.5" width="18" height="2" fill="#c4c4c4"/><rect x="0" y="9.5" width="18" height="3" fill="#c4c4c4"/></svg>
<div class="a" style="left:1896px;top:187px;font-family:Liberation Serif,serif;font-style:italic;color:#c4c4c4;font-size:17px;line-height:18px">fx</div>
<svg class="a" style="left:1894px;top:229px;" width="18" height="18" viewBox="0 0 18 18"><rect x="1" y="9" width="6" height="6" stroke="#c4c4c4" fill="none"/><rect x="4" y="12" width="6" height="6" fill="#c4c4c4"/><path d="M12 2h5M13.5 2v14M15.5 2v14" stroke="#c4c4c4" stroke-width="1.3"/><path d="M14 2a3 3 0 0 0 0 6" fill="#c4c4c4"/></svg>
<svg class="a" style="left:1893px;top:274px;" width="20" height="10" viewBox="0 0 20 10"><rect x="1" y="1" width="11" height="8" rx="4" stroke="#c4c4c4" fill="none" stroke-width="1.5"/><rect x="8" y="1" width="11" height="8" rx="4" stroke="#c4c4c4" fill="none" stroke-width="1.5"/></svg>
<svg class="a" style="left:1894px;top:311px;" width="18" height="18" viewBox="0 0 18 18"><path d="M9 1L17 6L9 11L1 6Z" fill="#c4c4c4"/><path d="M1 10L9 15L17 10" stroke="#c4c4c4" fill="none" stroke-width="2"/></svg>
<svg class="a" style="left:1894px;top:355px;" width="17" height="12" viewBox="0 0 17 12"><rect x=".5" y=".5" width="16" height="11" fill="#6e6e6e" stroke="#c4c4c4"/><rect x="6" y="1" width="5" height="4.5" fill="#c4c4c4"/><path d="M.5 6H16.5M5.5 .5V11.5M11 .5V11.5" stroke="#c4c4c4" stroke-width="1"/></svg>
<div class="a" style="left:1689px;top:764.5px;font-size:20.5px;letter-spacing:3.75px;color:#ffffff;white-space:nowrap;line-height:24px">INDESIGN TEMPLATE</div>
<div class="a" style="left:1719px;top:809px;width:211px;height:205px;background:#49021f;border-radius:47px"></div>
<svg class="a" style="left:1719px;top:809px;" width="211" height="205" viewBox="0 0 211 205"><rect x="56.5" y="51.7" width="20.3" height="94" rx="1.5" fill="#ff3366"/><path d="M135.7 44.5 H156 V144.5 C148 147 138 147.5 129 147.5 C104 147.5 90 133 90 110.5 C90 87 106 72.7 127.5 72.7 C130.5 72.7 133 73 135.7 73.5 Z M135.7 91 C133.5 90.5 131.5 90.3 129 90.3 C118 90.3 110 97.5 110 110 C110 123 117.5 130 129 130 C131.5 130 133.5 129.8 135.7 129.5 Z" fill="#ff3366" fill-rule="evenodd"/></svg>
</body></html>
